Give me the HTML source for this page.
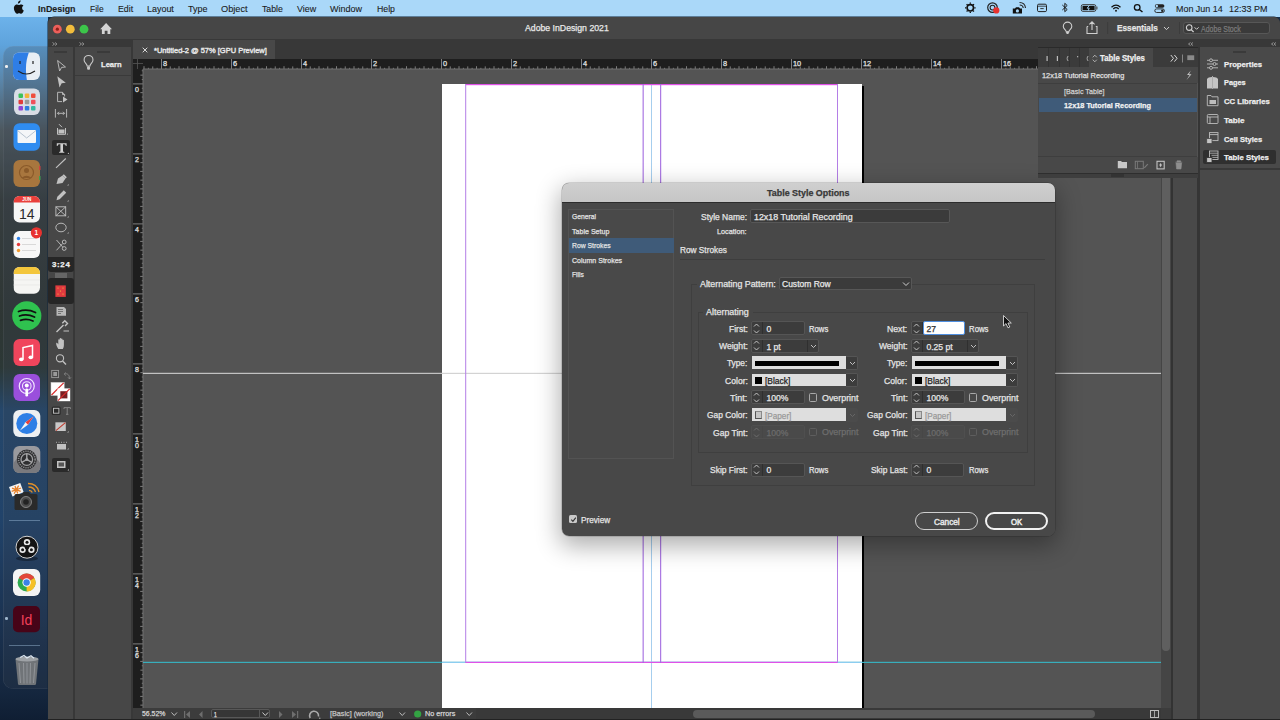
<!DOCTYPE html>
<html><head><meta charset="utf-8"><title>InDesign</title>
<style>*{margin:0;padding:0;box-sizing:border-box}html,body{width:1280px;height:720px;overflow:hidden;position:relative;background:#17324f;font-family:"Liberation Sans",sans-serif}svg{position:absolute;overflow:visible}</style>
</head><body>
<div style='position:absolute;left:0px;top:17px;width:48px;height:703px;background:linear-gradient(180deg,#6cb2ea 0px,#5ea3dc 28px,#5a86aa 63px,#4d585f 113px,#363d3f 183px,#2e3634 300px,#2c3836 350px,#25476b 393px,#21436a 503px,#1b3352 600px,#15273f 673px,#0f1e33 703px);'></div>
<div style='position:absolute;left:3px;top:45.5px;width:60px;height:643px;background:rgba(60,70,80,0.22);border-radius:10px;box-shadow:inset 0 0 0 0.6px rgba(255,255,255,0.10)'></div>
<svg style='left:0;top:52px' width='48' height='29'><defs><clipPath id='fc'><rect x='13' y='0.5' width='27' height='27.5' rx='6'/></clipPath></defs><g clip-path='url(#fc)'><rect x='13' y='0' width='27' height='29' fill='#e8eef4'/><path d='M13,0 H29 C26,8 25,16 27,29 H13Z' fill='#2f7ee6'/></g><path d='M20,9 V12 M33,9 V12' stroke='#222' stroke-width='1.2'/><path d='M18,19 Q26.5,25 35,19' fill='none' stroke='#222' stroke-width='1.1'/></svg>
<div style='position:absolute;left:5px;top:65px;width:2.5px;height:2.5px;border-radius:50%;background:#f0f0f0'></div>
<div style='position:absolute;left:5px;top:617px;width:2.5px;height:2.5px;border-radius:50%;background:#9fb6cc'></div>
<svg style='left:0;top:88px' width='48' height='28'><rect x='14' y='0.5' width='26' height='26.5' rx='6' fill='#d9dde6'/><rect x='18.5' y='5.5' width='4.5' height='4.5' rx='1' fill='#3cc15a'/><rect x='24.8' y='5.5' width='4.5' height='4.5' rx='1' fill='#f2b33a'/><rect x='31' y='5.5' width='4.5' height='4.5' rx='1' fill='#ef4c3c'/><rect x='18.5' y='11.8' width='4.5' height='4.5' rx='1' fill='#e13a3a'/><rect x='24.8' y='11.8' width='4.5' height='4.5' rx='1' fill='#9a9a9a'/><rect x='31' y='11.8' width='4.5' height='4.5' rx='1' fill='#f0505a'/><rect x='18.5' y='18' width='4.5' height='4.5' rx='1' fill='#8e44d6'/><rect x='24.8' y='18' width='4.5' height='4.5' rx='1' fill='#2e7de0'/><rect x='31' y='18' width='4.5' height='4.5' rx='1' fill='#36b8a0'/></svg>
<svg style='left:0;top:123px' width='48' height='29'><rect x='13.5' y='0.3' width='26.5' height='27.5' rx='6' fill='#2f8cf0'/><rect x='17.5' y='7' width='18.5' height='13' rx='1' fill='#f4f6f8'/><path d='M17.5,7.5 L26.7,15 L36,7.5' fill='none' stroke='#b8c4d0' stroke-width='1'/></svg>
<svg style='left:0;top:160px' width='48' height='28'><rect x='13.5' y='0' width='26.5' height='27' rx='6' fill='#a8763e'/><circle cx='26.5' cy='12.5' r='7' fill='none' stroke='#8a5a2a' stroke-width='1.2'/><circle cx='26.5' cy='10.5' r='2.5' fill='#8a5a2a'/><path d='M21.5,18 Q26.5,13.5 31.5,18' fill='#8a5a2a'/><rect x='39' y='6' width='1.5' height='4' fill='#d04040'/><rect x='39' y='16' width='1.5' height='4' fill='#40a050'/></svg>
<svg style='left:0;top:195.8px' width='48' height='27'><defs><clipPath id='cc'><rect x='13.5' y='0' width='26.5' height='26.5' rx='6'/></clipPath></defs><g clip-path='url(#cc)'><rect x='13.5' y='0' width='26.5' height='27' fill='#f6f6f6'/><rect x='13.5' y='0' width='26.5' height='6.5' fill='#e9403c'/></g><text x='26.75' y='5.3' font-family='Liberation Sans' font-size='4.6' font-weight='bold' fill='#fff' text-anchor='middle'>JUN</text><text x='26.75' y='22.5' font-family='Liberation Sans' font-size='14' fill='#2a2a2a' text-anchor='middle'>14</text></svg>
<svg style='left:0;top:226px' width='48' height='33'><rect x='13.5' y='5' width='26.5' height='27' rx='6' fill='#f7f7f7'/><circle cx='18.5' cy='12.5' r='1.7' fill='#2c7fe6'/><circle cx='18.5' cy='18.5' r='1.7' fill='#e23a3a'/><circle cx='18.5' cy='24.5' r='1.7' fill='#f29a2e'/><path d='M22,12.5 H36 M22,18.5 H36 M22,24.5 H36' stroke='#d0d0d0' stroke-width='0.8'/><circle cx='36.4' cy='6.8' r='5.6' fill='#e8322f'/><text x='36.4' y='9.3' font-family='Liberation Sans' font-size='6.5' font-weight='bold' fill='#fff' text-anchor='middle'>1</text></svg>
<svg style='left:0;top:267.2px' width='48' height='27'><defs><clipPath id='nc'><rect x='13.5' y='0' width='26.5' height='26.8' rx='6'/></clipPath></defs><g clip-path='url(#nc)'><rect x='13.5' y='0' width='26.5' height='27' fill='#f5f5f3'/><rect x='13.5' y='0' width='26.5' height='7' fill='#f3c63c'/></g><path d='M13.5,13 H40 M13.5,18 H40' stroke='#e2e2e2' stroke-width='0.6'/></svg>
<svg style='left:0;top:301px' width='48' height='30'><circle cx='26.8' cy='14.75' r='14.6' fill='#2fc24f'/><path d='M18.5,10.5 Q27,7.5 35.5,11.5 M19.5,15 Q27,12.5 34.5,16 M20.5,19.3 Q27,17.3 33,20' fill='none' stroke='#111' stroke-width='1.8' stroke-linecap='round'/></svg>
<svg style='left:0;top:338.6px' width='48' height='28'><rect x='13.5' y='0' width='26.5' height='27' rx='6' fill='#f0455c'/><path d='M23,20 V8.5 L32.5,6.5 V18' fill='none' stroke='#fff' stroke-width='1.5'/><ellipse cx='21.3' cy='20.3' rx='2.3' ry='1.9' fill='#fff'/><ellipse cx='30.8' cy='18.3' rx='2.3' ry='1.9' fill='#fff'/></svg>
<svg style='left:0;top:374px' width='48' height='28'><rect x='13.5' y='0' width='26.5' height='27' rx='6' fill='#9a4fdc'/><circle cx='26.75' cy='12' r='7.5' fill='none' stroke='#f2e6ff' stroke-width='1.2'/><circle cx='26.75' cy='12' r='4.3' fill='none' stroke='#f2e6ff' stroke-width='1.1'/><circle cx='26.75' cy='11.5' r='2' fill='#fff'/><rect x='25.4' y='14.5' width='2.7' height='8' rx='1.3' fill='#fff'/></svg>
<svg style='left:0;top:409.7px' width='48' height='28'><rect x='13.3' y='0' width='27' height='27' rx='6' fill='#eef0f2'/><circle cx='26.8' cy='13.5' r='10.5' fill='#2d7fe6'/><path d='M20,20.5 L25.5,12.2 L33.5,6.5 L28,14.8Z' fill='#f4f4f4'/><path d='M25.5,12.2 L33.5,6.5 L28,14.8Z' fill='#e8403a'/></svg>
<svg style='left:0;top:445.8px' width='48' height='28'><rect x='13.3' y='0' width='27' height='27' rx='6' fill='#9a9a9e'/><rect x='13.3' y='13' width='27' height='14' rx='6' fill='#7a7a7e'/><circle cx='26.8' cy='13.5' r='10' fill='#2e2e30'/><circle cx='26.8' cy='13.5' r='8.3' fill='none' stroke='#8a8a8c' stroke-width='1.6' stroke-dasharray='1.2 1'/><circle cx='26.8' cy='13.5' r='5.8' fill='none' stroke='#a0a0a2' stroke-width='1.3'/><path d='M26.8,13.5 L26.8,7.7 M26.8,13.5 L21.8,16.4 M26.8,13.5 L31.8,16.4' stroke='#a8a8aa' stroke-width='1.4'/><circle cx='26.8' cy='13.5' r='1.5' fill='#a8a8aa'/></svg>
<svg style='left:0;top:479.7px' width='48' height='31'><g transform='rotate(-20 17 10)'><rect x='10.5' y='4.5' width='12' height='10' fill='#f4f4f4'/><path d='M13,6.5 L20,12.5 M20,6.5 L13,12.5 M16.5,5.5 V13.5 M11.5,9.5 H21.5' stroke='#e8822a' stroke-width='1.3'/></g><path d='M28,3.5 Q37,3.5 39,12 M28.5,7 Q34,7 35.5,12 M29,10.3 Q31.5,10.3 32.3,12.5' fill='none' stroke='#e0902a' stroke-width='1.3'/><path d='M16,14 H22 L23.5,12 H29 L30.5,14 H36 Q37.5,14 37.5,15.5 V28.5 Q37.5,30 36,30 H16 Q14.5,30 14.5,28.5 V15.5 Q14.5,14 16,14Z' fill='#2a2a2a'/><circle cx='26' cy='22' r='5.5' fill='#4a4a4a' stroke='#8a8a8a' stroke-width='0.9'/><circle cx='26' cy='22' r='2.8' fill='#222'/></svg>
<div style='position:absolute;left:9px;top:520px;width:31px;height:0.8px;background:rgba(160,190,220,0.45);'></div>
<svg style='left:0;top:533.7px' width='48' height='28'><ellipse cx='27' cy='24.5' rx='11' ry='2.5' fill='rgba(0,0,0,0.35)'/><circle cx='27' cy='13.2' r='11' fill='#141414' stroke='#cfcfcf' stroke-width='1'/><g fill='#e8e8e8'><circle cx='27' cy='8.2' r='3.2'/><circle cx='22.6' cy='15.7' r='3.2'/><circle cx='31.4' cy='15.7' r='3.2'/></g><g fill='#141414'><circle cx='27' cy='8.2' r='1.5'/><circle cx='22.6' cy='15.7' r='1.5'/><circle cx='31.4' cy='15.7' r='1.5'/><circle cx='27' cy='13.2' r='2.2'/></g></svg>
<svg style='left:0;top:569px' width='48' height='28'><rect x='13' y='0' width='27.2' height='27' rx='6' fill='#f4f4f4'/><circle cx='26.6' cy='13.5' r='9' fill='#2da94f'/><path d='M26.6,13.5 L18.8,9 A9,9 0 0 1 34.4,9Z' fill='#e2463a'/><path d='M26.6,13.5 L34.4,9 A9,9 0 0 1 26.6,22.5Z' fill='#f6c026'/><circle cx='26.6' cy='13.5' r='4.2' fill='#fff'/><circle cx='26.6' cy='13.5' r='3.2' fill='#3b82e8'/></svg>
<svg style='left:0;top:605.6px' width='48' height='27'><rect x='13' y='0' width='27' height='26.3' rx='5' fill='#470418'/><text x='26.5' y='19' font-family='Liberation Sans' font-size='14' font-weight='normal' fill='#f0405a' text-anchor='middle'>Id</text></svg>
<div style='position:absolute;left:9px;top:644.5px;width:31px;height:0.8px;background:rgba(160,190,220,0.45);'></div>
<svg style='left:0;top:654px' width='48' height='32'><path d='M15.5,5 H38.5 L36,30 Q35.8,31 34.8,31 H19.2 Q18.2,31 18,30Z' fill='#707478'/><ellipse cx='27' cy='5' rx='11.5' ry='2.6' fill='#9ea2a6'/><path d='M20,3.5 L24,1.5 L27,4 L31,1.8 L34,4.2' fill='none' stroke='#dde6f0' stroke-width='1.2'/><path d='M19,9 L20.5,29 M23.5,9 L24,29.5 M27,9 V29.5 M30.5,9 L30,29.5 M35,9 L33.5,29' stroke='#a6aaae' stroke-width='0.6'/></svg>
<div style='position:absolute;left:0px;top:0px;width:1280px;height:17px;background:#aad8f9;'></div>
<div style='position:absolute;left:38.3px;top:5.37px;white-space:nowrap;line-height:1;font-family:"Liberation Sans",sans-serif;font-size:8.9px;font-weight:bold;color:#1c1c1c;transform:scaleX(1.0004);transform-origin:0 0;-webkit-text-stroke:0.25px currentColor;-webkit-text-stroke:0.1px #1c1c1c'>InDesign</div>
<div style='position:absolute;left:89.8px;top:5.37px;white-space:nowrap;line-height:1;font-family:"Liberation Sans",sans-serif;font-size:8.9px;font-weight:normal;color:#1c1c1c;transform:scaleX(0.9502);transform-origin:0 0;-webkit-text-stroke:0.25px currentColor;-webkit-text-stroke:0.1px #1c1c1c'>File</div>
<div style='position:absolute;left:117.7px;top:5.37px;white-space:nowrap;line-height:1;font-family:"Liberation Sans",sans-serif;font-size:8.9px;font-weight:normal;color:#1c1c1c;transform:scaleX(0.9871);transform-origin:0 0;-webkit-text-stroke:0.25px currentColor;-webkit-text-stroke:0.1px #1c1c1c'>Edit</div>
<div style='position:absolute;left:146.9px;top:5.37px;white-space:nowrap;line-height:1;font-family:"Liberation Sans",sans-serif;font-size:8.9px;font-weight:normal;color:#1c1c1c;transform:scaleX(1.0073);transform-origin:0 0;-webkit-text-stroke:0.25px currentColor;-webkit-text-stroke:0.1px #1c1c1c'>Layout</div>
<div style='position:absolute;left:187.7px;top:5.37px;white-space:nowrap;line-height:1;font-family:"Liberation Sans",sans-serif;font-size:8.9px;font-weight:normal;color:#1c1c1c;transform:scaleX(1.0130);transform-origin:0 0;-webkit-text-stroke:0.25px currentColor;-webkit-text-stroke:0.1px #1c1c1c'>Type</div>
<div style='position:absolute;left:221.3px;top:5.37px;white-space:nowrap;line-height:1;font-family:"Liberation Sans",sans-serif;font-size:8.9px;font-weight:normal;color:#1c1c1c;transform:scaleX(1.0368);transform-origin:0 0;-webkit-text-stroke:0.25px currentColor;-webkit-text-stroke:0.1px #1c1c1c'>Object</div>
<div style='position:absolute;left:262.2px;top:5.37px;white-space:nowrap;line-height:1;font-family:"Liberation Sans",sans-serif;font-size:8.9px;font-weight:normal;color:#1c1c1c;transform:scaleX(0.9850);transform-origin:0 0;-webkit-text-stroke:0.25px currentColor;-webkit-text-stroke:0.1px #1c1c1c'>Table</div>
<div style='position:absolute;left:296.9px;top:5.37px;white-space:nowrap;line-height:1;font-family:"Liberation Sans",sans-serif;font-size:8.9px;font-weight:normal;color:#1c1c1c;transform:scaleX(1.0064);transform-origin:0 0;-webkit-text-stroke:0.25px currentColor;-webkit-text-stroke:0.1px #1c1c1c'>View</div>
<div style='position:absolute;left:330.4px;top:5.37px;white-space:nowrap;line-height:1;font-family:"Liberation Sans",sans-serif;font-size:8.9px;font-weight:normal;color:#1c1c1c;transform:scaleX(1.0165);transform-origin:0 0;-webkit-text-stroke:0.25px currentColor;-webkit-text-stroke:0.1px #1c1c1c'>Window</div>
<div style='position:absolute;left:376.5px;top:5.37px;white-space:nowrap;line-height:1;font-family:"Liberation Sans",sans-serif;font-size:8.9px;font-weight:normal;color:#1c1c1c;transform:scaleX(0.9855);transform-origin:0 0;-webkit-text-stroke:0.25px currentColor;-webkit-text-stroke:0.1px #1c1c1c'>Help</div>
<div style='position:absolute;left:1175.9px;top:4.52px;white-space:nowrap;line-height:1;font-family:"Liberation Sans",sans-serif;font-size:8.6px;font-weight:normal;color:#1c1c1c;transform:scaleX(1.0396);transform-origin:0 0;-webkit-text-stroke:0.25px currentColor;-webkit-text-stroke:0.1px #1c1c1c'>Mon Jun 14</div>
<div style='position:absolute;left:1228.7px;top:4.52px;white-space:nowrap;line-height:1;font-family:"Liberation Sans",sans-serif;font-size:8.6px;font-weight:normal;color:#1c1c1c;transform:scaleX(1.0436);transform-origin:0 0;-webkit-text-stroke:0.25px currentColor;-webkit-text-stroke:0.1px #1c1c1c'>12:33 PM</div>
<svg style='left:0;top:0' width='1280' height='17'><path d='M19.6,4.2 C20.2,3.4 20.5,2.6 20.4,1.8 C19.6,1.9 18.8,2.4 18.3,3 C17.9,3.6 17.6,4.3 17.7,5 C18.5,5.1 19.1,4.8 19.6,4.2Z M21.9,9.5 C21.9,8 23.1,7.3 23.2,7.2 C22.5,6.2 21.4,6.1 21,6.1 C20.1,6 19.2,6.6 18.7,6.6 C18.2,6.6 17.5,6.1 16.7,6.1 C15.7,6.1 14.7,6.7 14.2,7.6 C13.1,9.5 13.9,12.3 15,13.8 C15.5,14.5 16.1,15.4 16.9,15.3 C17.7,15.3 18,14.8 18.9,14.8 C19.9,14.8 20.1,15.3 21,15.3 C21.8,15.3 22.3,14.5 22.8,13.8 C23.4,13 23.6,12.2 23.7,12.1 C23.6,12.1 21.9,11.4 21.9,9.5Z' fill='#111' transform='translate(0.2,-1.5) scale(1)'/><g transform='translate(970.3,7.8)'><circle r='3.2' fill='none' stroke='#111' stroke-width='1.6'/><g stroke='#111' stroke-width='1.3'><path d='M0,-5.3V-4M0,5.3V4M-5.3,0H-4M5.3,0H4M-3.7,-3.7L-2.8,-2.8M3.7,3.7L2.8,2.8M-3.7,3.7L-2.8,2.8M3.7,-3.7L2.8,-2.8'/></g></g><circle cx='992.5' cy='7.6' r='4.8' fill='none' stroke='#222' stroke-width='1.2'/><circle cx='992.5' cy='7.6' r='2.4' fill='none' stroke='#222' stroke-width='1.1'/><circle cx='996.3' cy='10.4' r='3.1' fill='#e8322f'/><path d='M1012.8,8.5 H1015 L1016,7.3 H1019 L1020,8.5 H1022 V13.5 H1012.8Z' fill='#111'/><circle cx='1017.4' cy='10.9' r='1.6' fill='#aad8f9'/><path d='M1019.5,2.5 Q1025,2.5 1025.5,8 M1019.7,5 Q1023,5 1023.2,8' fill='none' stroke='#222' stroke-width='1.1'/><rect x='1037.5' y='4.2' width='9' height='7.4' rx='1.3' fill='none' stroke='#222' stroke-width='1'/><path d='M1037.5,6.2 H1046.5' stroke='#222' stroke-width='0.8'/><path d='M1040.3,8.6 H1043.7' stroke='#222' stroke-width='0.9'/><path d='M1062.3,5 L1067.2,9.5 L1064.8,11.7 V3.3 L1067.2,5.5 L1062.3,10' fill='none' stroke='#111' stroke-width='0.9'/><rect x='1081.3' y='4.6' width='14.5' height='6.8' rx='1.6' fill='none' stroke='#333' stroke-width='0.9'/><rect x='1082.5' y='5.8' width='12.1' height='4.4' fill='#111'/><path d='M1089.5,5.2 L1087.2,8.2 H1089.2 L1088,11' fill='none' stroke='#aad8f9' stroke-width='0.9'/><rect x='1096.3' y='6.6' width='1.2' height='2.8' fill='#555'/><path d='M1111.5,7.2 Q1116,3 1120.5,7.2' fill='none' stroke='#111' stroke-width='1.3'/><path d='M1113.3,8.9 Q1116,6.4 1118.7,8.9' fill='none' stroke='#111' stroke-width='1.3'/><circle cx='1116' cy='10.7' r='0.95' fill='#111'/><circle cx='1137.2' cy='7.4' r='2.8' fill='none' stroke='#111' stroke-width='1.3'/><path d='M1139.3,9.5 L1142.5,12' stroke='#111' stroke-width='1.5'/><rect x='1154.8' y='4.2' width='9.6' height='3.6' rx='1.8' fill='#222'/><circle cx='1156.8' cy='6' r='1.2' fill='#aad8f9'/><rect x='1154.8' y='8.9' width='9.6' height='3.6' rx='1.8' fill='none' stroke='#222' stroke-width='0.9'/><circle cx='1162.3' cy='10.7' r='1.2' fill='#222'/></svg>
<div style='position:absolute;left:48px;top:16.5px;width:1232px;height:703.5px;background:#383838;border-top-left-radius:6px;border-top-right-radius:6px;box-shadow:0 0 0 0.5px #10243a'></div>
<div style='position:absolute;left:48px;top:17px;width:1232px;height:22px;background:#464646;border-top-left-radius:6px;border-top-right-radius:6px'></div>
<div style='position:absolute;left:48px;top:47px;width:25px;height:673px;background:#474747;'></div>
<div style='position:absolute;left:75px;top:47px;width:56px;height:673px;background:#474747;'></div>
<div style='position:absolute;left:75px;top:75px;width:56px;height:1px;background:#3d3d3d;'></div>
<div style='position:absolute;left:133px;top:40px;width:142px;height:19px;background:#484848;'></div>
<div style='position:absolute;left:133px;top:59px;width:1028px;height:10px;background:#1e1e1e;'></div>
<div style='position:absolute;left:133px;top:69px;width:10px;height:639px;background:#1e1e1e;'></div>
<div style='position:absolute;left:143px;top:69px;width:1018px;height:639px;background:#545454;'></div>
<div style='position:absolute;left:1161px;top:59px;width:10px;height:649px;background:#454545;'></div>
<div style='position:absolute;left:1162px;top:69px;width:8px;height:582px;background:#5f5f5f;border-radius:4px'></div>
<div style='position:absolute;left:1171px;top:47px;width:2px;height:673px;background:#333333;'></div>
<div style='position:absolute;left:1173px;top:47px;width:24px;height:673px;background:#494949;'></div>
<div style='position:absolute;left:1197px;top:47px;width:3px;height:673px;background:#353535;'></div>
<div style='position:absolute;left:1200px;top:47px;width:80px;height:673px;background:#494949;'></div>
<div style='position:absolute;left:133px;top:708px;width:1038px;height:12px;background:#3c3c3c;'></div>
<div style='position:absolute;left:48px;top:719px;width:1232px;height:1px;background:#222;'></div>
<div style='position:absolute;left:442px;top:84px;width:420px;height:624px;background:#ffffff;'></div>
<div style='position:absolute;left:862px;top:86px;width:2px;height:622px;background:#000;'></div>
<svg style='left:0;top:0' width='1280' height='720'><path d='M144.00,66.2V69 M148.38,67.8V69 M152.75,66.4V69 M157.12,67.8V69 M161.50,59V69 M165.88,67.8V69 M170.25,66.4V69 M174.62,67.8V69 M179.00,66.2V69 M183.38,67.8V69 M187.75,66.4V69 M192.12,67.8V69 M196.50,66.2V69 M200.88,67.8V69 M205.25,66.4V69 M209.62,67.8V69 M214.00,66.2V69 M218.38,67.8V69 M222.75,66.4V69 M227.12,67.8V69 M231.50,59V69 M235.88,67.8V69 M240.25,66.4V69 M244.62,67.8V69 M249.00,66.2V69 M253.38,67.8V69 M257.75,66.4V69 M262.12,67.8V69 M266.50,66.2V69 M270.88,67.8V69 M275.25,66.4V69 M279.62,67.8V69 M284.00,66.2V69 M288.38,67.8V69 M292.75,66.4V69 M297.12,67.8V69 M301.50,59V69 M305.88,67.8V69 M310.25,66.4V69 M314.62,67.8V69 M319.00,66.2V69 M323.38,67.8V69 M327.75,66.4V69 M332.12,67.8V69 M336.50,66.2V69 M340.88,67.8V69 M345.25,66.4V69 M349.62,67.8V69 M354.00,66.2V69 M358.38,67.8V69 M362.75,66.4V69 M367.12,67.8V69 M371.50,59V69 M375.88,67.8V69 M380.25,66.4V69 M384.62,67.8V69 M389.00,66.2V69 M393.38,67.8V69 M397.75,66.4V69 M402.12,67.8V69 M406.50,66.2V69 M410.88,67.8V69 M415.25,66.4V69 M419.62,67.8V69 M424.00,66.2V69 M428.38,67.8V69 M432.75,66.4V69 M437.12,67.8V69 M441.50,59V69 M445.88,67.8V69 M450.25,66.4V69 M454.62,67.8V69 M459.00,66.2V69 M463.38,67.8V69 M467.75,66.4V69 M472.12,67.8V69 M476.50,66.2V69 M480.88,67.8V69 M485.25,66.4V69 M489.62,67.8V69 M494.00,66.2V69 M498.38,67.8V69 M502.75,66.4V69 M507.12,67.8V69 M511.50,59V69 M515.88,67.8V69 M520.25,66.4V69 M524.62,67.8V69 M529.00,66.2V69 M533.38,67.8V69 M537.75,66.4V69 M542.12,67.8V69 M546.50,66.2V69 M550.88,67.8V69 M555.25,66.4V69 M559.62,67.8V69 M564.00,66.2V69 M568.38,67.8V69 M572.75,66.4V69 M577.12,67.8V69 M581.50,59V69 M585.88,67.8V69 M590.25,66.4V69 M594.62,67.8V69 M599.00,66.2V69 M603.38,67.8V69 M607.75,66.4V69 M612.12,67.8V69 M616.50,66.2V69 M620.88,67.8V69 M625.25,66.4V69 M629.62,67.8V69 M634.00,66.2V69 M638.38,67.8V69 M642.75,66.4V69 M647.12,67.8V69 M651.50,59V69 M655.88,67.8V69 M660.25,66.4V69 M664.62,67.8V69 M669.00,66.2V69 M673.38,67.8V69 M677.75,66.4V69 M682.12,67.8V69 M686.50,66.2V69 M690.88,67.8V69 M695.25,66.4V69 M699.62,67.8V69 M704.00,66.2V69 M708.38,67.8V69 M712.75,66.4V69 M717.12,67.8V69 M721.50,59V69 M725.88,67.8V69 M730.25,66.4V69 M734.62,67.8V69 M739.00,66.2V69 M743.38,67.8V69 M747.75,66.4V69 M752.12,67.8V69 M756.50,66.2V69 M760.88,67.8V69 M765.25,66.4V69 M769.62,67.8V69 M774.00,66.2V69 M778.38,67.8V69 M782.75,66.4V69 M787.12,67.8V69 M791.50,59V69 M795.88,67.8V69 M800.25,66.4V69 M804.62,67.8V69 M809.00,66.2V69 M813.38,67.8V69 M817.75,66.4V69 M822.12,67.8V69 M826.50,66.2V69 M830.88,67.8V69 M835.25,66.4V69 M839.62,67.8V69 M844.00,66.2V69 M848.38,67.8V69 M852.75,66.4V69 M857.12,67.8V69 M861.50,59V69 M865.88,67.8V69 M870.25,66.4V69 M874.62,67.8V69 M879.00,66.2V69 M883.38,67.8V69 M887.75,66.4V69 M892.12,67.8V69 M896.50,66.2V69 M900.88,67.8V69 M905.25,66.4V69 M909.62,67.8V69 M914.00,66.2V69 M918.38,67.8V69 M922.75,66.4V69 M927.12,67.8V69 M931.50,59V69 M935.88,67.8V69 M940.25,66.4V69 M944.62,67.8V69 M949.00,66.2V69 M953.38,67.8V69 M957.75,66.4V69 M962.12,67.8V69 M966.50,66.2V69 M970.88,67.8V69 M975.25,66.4V69 M979.62,67.8V69 M984.00,66.2V69 M988.38,67.8V69 M992.75,66.4V69 M997.12,67.8V69 M1001.50,59V69 M1005.88,67.8V69 M1010.25,66.4V69 M1014.62,67.8V69 M1019.00,66.2V69 M1023.38,67.8V69 M1027.75,66.4V69 M1032.12,67.8V69 M1036.50,66.2V69 M1040.88,67.8V69 M1045.25,66.4V69 M1049.62,67.8V69 M1054.00,66.2V69 M1058.38,67.8V69 M1062.75,66.4V69 M1067.12,67.8V69 M1071.50,59V69 M1075.88,67.8V69 M1080.25,66.4V69 M1084.62,67.8V69 M1089.00,66.2V69 M1093.38,67.8V69 M1097.75,66.4V69 M1102.12,67.8V69 M1106.50,66.2V69 M1110.88,67.8V69 M1115.25,66.4V69 M1119.62,67.8V69 M1124.00,66.2V69 M1128.38,67.8V69 M1132.75,66.4V69 M1137.12,67.8V69 M1141.50,59V69 M1145.88,67.8V69 M1150.25,66.4V69 M1154.62,67.8V69 M1159.00,66.2V69' stroke='#8a8a8a' stroke-width='0.9' fill='none'/><rect x='143' y='68.5' width='1018' height='1' fill='#707070'/></svg>
<svg style='left:0;top:0' width='1280' height='720'><path d='M141.8,70.78H143 M140.4,75.15H143 M141.8,79.53H143 M133,83.90H143 M141.8,88.28H143 M140.4,92.65H143 M141.8,97.03H143 M140.2,101.40H143 M141.8,105.78H143 M140.4,110.15H143 M141.8,114.53H143 M140.2,118.90H143 M141.8,123.28H143 M140.4,127.65H143 M141.8,132.03H143 M140.2,136.40H143 M141.8,140.78H143 M140.4,145.15H143 M141.8,149.53H143 M133,153.90H143 M141.8,158.28H143 M140.4,162.65H143 M141.8,167.03H143 M140.2,171.40H143 M141.8,175.78H143 M140.4,180.15H143 M141.8,184.53H143 M140.2,188.90H143 M141.8,193.28H143 M140.4,197.65H143 M141.8,202.03H143 M140.2,206.40H143 M141.8,210.78H143 M140.4,215.15H143 M141.8,219.53H143 M133,223.90H143 M141.8,228.28H143 M140.4,232.65H143 M141.8,237.03H143 M140.2,241.40H143 M141.8,245.78H143 M140.4,250.15H143 M141.8,254.53H143 M140.2,258.90H143 M141.8,263.27H143 M140.4,267.65H143 M141.8,272.02H143 M140.2,276.40H143 M141.8,280.77H143 M140.4,285.15H143 M141.8,289.52H143 M133,293.90H143 M141.8,298.27H143 M140.4,302.65H143 M141.8,307.02H143 M140.2,311.40H143 M141.8,315.77H143 M140.4,320.15H143 M141.8,324.52H143 M140.2,328.90H143 M141.8,333.27H143 M140.4,337.65H143 M141.8,342.02H143 M140.2,346.40H143 M141.8,350.77H143 M140.4,355.15H143 M141.8,359.52H143 M133,363.90H143 M141.8,368.27H143 M140.4,372.65H143 M141.8,377.02H143 M140.2,381.40H143 M141.8,385.77H143 M140.4,390.15H143 M141.8,394.52H143 M140.2,398.90H143 M141.8,403.27H143 M140.4,407.65H143 M141.8,412.02H143 M140.2,416.40H143 M141.8,420.77H143 M140.4,425.15H143 M141.8,429.52H143 M133,433.90H143 M141.8,438.27H143 M140.4,442.65H143 M141.8,447.02H143 M140.2,451.40H143 M141.8,455.77H143 M140.4,460.15H143 M141.8,464.52H143 M140.2,468.90H143 M141.8,473.27H143 M140.4,477.65H143 M141.8,482.02H143 M140.2,486.40H143 M141.8,490.77H143 M140.4,495.15H143 M141.8,499.52H143 M133,503.90H143 M141.8,508.27H143 M140.4,512.65H143 M141.8,517.02H143 M140.2,521.40H143 M141.8,525.77H143 M140.4,530.15H143 M141.8,534.52H143 M140.2,538.90H143 M141.8,543.27H143 M140.4,547.65H143 M141.8,552.02H143 M140.2,556.40H143 M141.8,560.77H143 M140.4,565.15H143 M141.8,569.52H143 M133,573.90H143 M141.8,578.27H143 M140.4,582.65H143 M141.8,587.02H143 M140.2,591.40H143 M141.8,595.77H143 M140.4,600.15H143 M141.8,604.52H143 M140.2,608.90H143 M141.8,613.27H143 M140.4,617.65H143 M141.8,622.02H143 M140.2,626.40H143 M141.8,630.77H143 M140.4,635.15H143 M141.8,639.52H143 M133,643.90H143 M141.8,648.27H143 M140.4,652.65H143 M141.8,657.02H143 M140.2,661.40H143 M141.8,665.77H143 M140.4,670.15H143 M141.8,674.52H143 M140.2,678.90H143 M141.8,683.27H143 M140.4,687.65H143 M141.8,692.02H143 M140.2,696.40H143 M141.8,700.77H143 M140.4,705.15H143' stroke='#8a8a8a' stroke-width='0.9' fill='none'/><rect x='142.5' y='69' width='1' height='639' fill='#707070'/></svg>
<div style='position:absolute;left:163.1px;top:61.46px;white-space:nowrap;line-height:1;font-family:"Liberation Sans",sans-serif;font-size:6.9px;font-weight:normal;color:#e2e2e2;transform:scaleX(1.0667);transform-origin:0 0;-webkit-text-stroke:0.25px currentColor;'>8</div>
<div style='position:absolute;left:233.1px;top:61.46px;white-space:nowrap;line-height:1;font-family:"Liberation Sans",sans-serif;font-size:6.9px;font-weight:normal;color:#e2e2e2;transform:scaleX(1.0667);transform-origin:0 0;-webkit-text-stroke:0.25px currentColor;'>6</div>
<div style='position:absolute;left:303.1px;top:61.46px;white-space:nowrap;line-height:1;font-family:"Liberation Sans",sans-serif;font-size:6.9px;font-weight:normal;color:#e2e2e2;transform:scaleX(1.0667);transform-origin:0 0;-webkit-text-stroke:0.25px currentColor;'>4</div>
<div style='position:absolute;left:373.1px;top:61.46px;white-space:nowrap;line-height:1;font-family:"Liberation Sans",sans-serif;font-size:6.9px;font-weight:normal;color:#e2e2e2;transform:scaleX(1.0667);transform-origin:0 0;-webkit-text-stroke:0.25px currentColor;'>2</div>
<div style='position:absolute;left:443.1px;top:61.46px;white-space:nowrap;line-height:1;font-family:"Liberation Sans",sans-serif;font-size:6.9px;font-weight:normal;color:#e2e2e2;transform:scaleX(1.0667);transform-origin:0 0;-webkit-text-stroke:0.25px currentColor;'>0</div>
<div style='position:absolute;left:513.1px;top:61.46px;white-space:nowrap;line-height:1;font-family:"Liberation Sans",sans-serif;font-size:6.9px;font-weight:normal;color:#e2e2e2;transform:scaleX(1.0667);transform-origin:0 0;-webkit-text-stroke:0.25px currentColor;'>2</div>
<div style='position:absolute;left:583.1px;top:61.46px;white-space:nowrap;line-height:1;font-family:"Liberation Sans",sans-serif;font-size:6.9px;font-weight:normal;color:#e2e2e2;transform:scaleX(1.0667);transform-origin:0 0;-webkit-text-stroke:0.25px currentColor;'>4</div>
<div style='position:absolute;left:653.1px;top:61.46px;white-space:nowrap;line-height:1;font-family:"Liberation Sans",sans-serif;font-size:6.9px;font-weight:normal;color:#e2e2e2;transform:scaleX(1.0667);transform-origin:0 0;-webkit-text-stroke:0.25px currentColor;'>6</div>
<div style='position:absolute;left:723.1px;top:61.46px;white-space:nowrap;line-height:1;font-family:"Liberation Sans",sans-serif;font-size:6.9px;font-weight:normal;color:#e2e2e2;transform:scaleX(1.0667);transform-origin:0 0;-webkit-text-stroke:0.25px currentColor;'>8</div>
<div style='position:absolute;left:793.1px;top:61.46px;white-space:nowrap;line-height:1;font-family:"Liberation Sans",sans-serif;font-size:6.9px;font-weight:normal;color:#e2e2e2;transform:scaleX(1.0688);transform-origin:0 0;-webkit-text-stroke:0.25px currentColor;'>10</div>
<div style='position:absolute;left:863.1px;top:61.46px;white-space:nowrap;line-height:1;font-family:"Liberation Sans",sans-serif;font-size:6.9px;font-weight:normal;color:#e2e2e2;transform:scaleX(1.0688);transform-origin:0 0;-webkit-text-stroke:0.25px currentColor;'>12</div>
<div style='position:absolute;left:933.1px;top:61.46px;white-space:nowrap;line-height:1;font-family:"Liberation Sans",sans-serif;font-size:6.9px;font-weight:normal;color:#e2e2e2;transform:scaleX(1.0688);transform-origin:0 0;-webkit-text-stroke:0.25px currentColor;'>14</div>
<div style='position:absolute;left:1003.1px;top:61.46px;white-space:nowrap;line-height:1;font-family:"Liberation Sans",sans-serif;font-size:6.9px;font-weight:normal;color:#e2e2e2;transform:scaleX(1.0688);transform-origin:0 0;-webkit-text-stroke:0.25px currentColor;'>16</div>
<div style='position:absolute;left:135.3px;top:87.21px;white-space:nowrap;line-height:1;font-family:"Liberation Sans",sans-serif;font-size:6.6px;font-weight:normal;color:#e2e2e2;transform:scaleX(1.0621);transform-origin:0 0;-webkit-text-stroke:0.25px currentColor;'>0</div>
<div style='position:absolute;left:135.3px;top:157.21px;white-space:nowrap;line-height:1;font-family:"Liberation Sans",sans-serif;font-size:6.6px;font-weight:normal;color:#e2e2e2;transform:scaleX(1.0621);transform-origin:0 0;-webkit-text-stroke:0.25px currentColor;'>2</div>
<div style='position:absolute;left:135.3px;top:227.21px;white-space:nowrap;line-height:1;font-family:"Liberation Sans",sans-serif;font-size:6.6px;font-weight:normal;color:#e2e2e2;transform:scaleX(1.0621);transform-origin:0 0;-webkit-text-stroke:0.25px currentColor;'>4</div>
<div style='position:absolute;left:135.3px;top:297.21px;white-space:nowrap;line-height:1;font-family:"Liberation Sans",sans-serif;font-size:6.6px;font-weight:normal;color:#e2e2e2;transform:scaleX(1.0621);transform-origin:0 0;-webkit-text-stroke:0.25px currentColor;'>6</div>
<div style='position:absolute;left:135.3px;top:367.21px;white-space:nowrap;line-height:1;font-family:"Liberation Sans",sans-serif;font-size:6.6px;font-weight:normal;color:#e2e2e2;transform:scaleX(1.0621);transform-origin:0 0;-webkit-text-stroke:0.25px currentColor;'>8</div>
<div style='position:absolute;left:135.3px;top:437.21px;white-space:nowrap;line-height:1;font-family:"Liberation Sans",sans-serif;font-size:6.6px;font-weight:normal;color:#e2e2e2;transform:scaleX(1.0621);transform-origin:0 0;-webkit-text-stroke:0.25px currentColor;'>1</div>
<div style='position:absolute;left:135.3px;top:442.81px;white-space:nowrap;line-height:1;font-family:"Liberation Sans",sans-serif;font-size:6.6px;font-weight:normal;color:#e2e2e2;transform:scaleX(1.0621);transform-origin:0 0;-webkit-text-stroke:0.25px currentColor;'>0</div>
<div style='position:absolute;left:135.3px;top:507.21px;white-space:nowrap;line-height:1;font-family:"Liberation Sans",sans-serif;font-size:6.6px;font-weight:normal;color:#e2e2e2;transform:scaleX(1.0621);transform-origin:0 0;-webkit-text-stroke:0.25px currentColor;'>1</div>
<div style='position:absolute;left:135.3px;top:512.81px;white-space:nowrap;line-height:1;font-family:"Liberation Sans",sans-serif;font-size:6.6px;font-weight:normal;color:#e2e2e2;transform:scaleX(1.0621);transform-origin:0 0;-webkit-text-stroke:0.25px currentColor;'>2</div>
<div style='position:absolute;left:135.3px;top:577.21px;white-space:nowrap;line-height:1;font-family:"Liberation Sans",sans-serif;font-size:6.6px;font-weight:normal;color:#e2e2e2;transform:scaleX(1.0621);transform-origin:0 0;-webkit-text-stroke:0.25px currentColor;'>1</div>
<div style='position:absolute;left:135.3px;top:582.81px;white-space:nowrap;line-height:1;font-family:"Liberation Sans",sans-serif;font-size:6.6px;font-weight:normal;color:#e2e2e2;transform:scaleX(1.0621);transform-origin:0 0;-webkit-text-stroke:0.25px currentColor;'>4</div>
<div style='position:absolute;left:135.3px;top:647.21px;white-space:nowrap;line-height:1;font-family:"Liberation Sans",sans-serif;font-size:6.6px;font-weight:normal;color:#e2e2e2;transform:scaleX(1.0621);transform-origin:0 0;-webkit-text-stroke:0.25px currentColor;'>1</div>
<div style='position:absolute;left:135.3px;top:652.81px;white-space:nowrap;line-height:1;font-family:"Liberation Sans",sans-serif;font-size:6.6px;font-weight:normal;color:#e2e2e2;transform:scaleX(1.0621);transform-origin:0 0;-webkit-text-stroke:0.25px currentColor;'>6</div>
<svg style='left:133px;top:59px' width='10' height='10'><path d='M0,4.5H10M4.5,0V10' stroke='#555' stroke-width='0.8'/></svg>
<svg style='left:0;top:0' width='1280' height='720'><rect x='143' y='372.8' width='1018' height='1.1' fill='#cfcfcf'/><rect x='143' y='661.8' width='1018' height='1.2' fill='#38aebc'/><rect x='442' y='661.8' width='420' height='1.2' fill='#8ccdf0'/><rect x='651' y='84' width='1' height='624' fill='#a6ceee'/><rect x='465.5' y='84' width='372' height='1.2' fill='#e050e8'/><rect x='465.5' y='661.8' width='372' height='1.2' fill='#e050e8'/><rect x='465.2' y='84' width='1' height='579' fill='#b47ee6'/><rect x='837' y='84' width='1' height='579' fill='#b47ee6'/><rect x='642.6' y='84' width='1.1' height='579' fill='#a36ce0'/><rect x='660.1' y='84' width='1.1' height='579' fill='#a36ce0'/></svg>
<div style='position:absolute;left:475.8px;top:708px;width:685.2px;height:11px;background:#393939;'></div>
<div style='position:absolute;left:692.9px;top:710px;width:402.4px;height:7.5px;background:#5a5a5a;border-radius:4px'></div>
<div style='position:absolute;left:142.4px;top:710.44px;white-space:nowrap;line-height:1;font-family:"Liberation Sans",sans-serif;font-size:7.4px;font-weight:normal;color:#d6d6d6;transform:scaleX(0.9331);transform-origin:0 0;-webkit-text-stroke:0.25px currentColor;'>56.52%</div>
<svg style='left:170.5px;top:712px' width='6.5' height='4'><polyline points='0.5,0.5 3.25,3.5 6.0,0.5' fill='none' stroke='#bbb' stroke-width='1'/></svg>
<svg style='left:183.8px;top:710.5px' width='7' height='7'><rect x='0' y='0' width='1.2' height='7' fill='#6e6e6e'/><path d='M6,0 L2,3.5 L6,7Z' fill='#6e6e6e'/></svg>
<svg style='left:198.6px;top:710.5px' width='4' height='7'><path d='M3.5,0 L0,3.5 L3.5,7Z' fill='#6e6e6e'/></svg>
<div style='position:absolute;left:211.1px;top:708.6px;width:59.4px;height:9.8px;background:#363636;border:1px solid #585858;border-radius:2px'></div>
<div style='position:absolute;left:258.8px;top:709.2px;width:1px;height:8.6px;background:#585858;'></div>
<div style='position:absolute;left:213.5px;top:710.64px;white-space:nowrap;line-height:1;font-family:"Liberation Sans",sans-serif;font-size:7.4px;font-weight:normal;color:#e0e0e0;transform:scaleX(0.6788);transform-origin:0 0;-webkit-text-stroke:0.25px currentColor;'>1</div>
<svg style='left:261.5px;top:712px' width='6.5' height='4'><polyline points='0.5,0.5 3.25,3.5 6.0,0.5' fill='none' stroke='#ccc' stroke-width='1'/></svg>
<svg style='left:279px;top:710.5px' width='4' height='7'><path d='M0,0 L3.5,3.5 L0,7Z' fill='#6e6e6e'/></svg>
<svg style='left:292px;top:710.5px' width='7' height='7'><path d='M0,0 L4,3.5 L0,7Z' fill='#6e6e6e'/><rect x='5' y='0' width='1.2' height='7' fill='#6e6e6e'/></svg>
<svg style='left:308.6px;top:709.5px' width='12' height='9'><path d='M1.2,8 A4.5,4.5 0 1 1 9.5,6.5' fill='none' stroke='#aaa' stroke-width='1.6'/><circle cx='10.8' cy='8.2' r='0.7' fill='#aaa'/></svg>
<div style='position:absolute;left:329.7px;top:710.44px;white-space:nowrap;line-height:1;font-family:"Liberation Sans",sans-serif;font-size:7.4px;font-weight:normal;color:#c4c4c4;transform:scaleX(0.9776);transform-origin:0 0;-webkit-text-stroke:0.25px currentColor;'>[Basic] (working)</div>
<svg style='left:398.75px;top:712px' width='6.5' height='4'><polyline points='0.5,0.5 3.25,3.5 6.0,0.5' fill='none' stroke='#bbb' stroke-width='1'/></svg>
<svg style='left:413.75px;top:710px' width='8' height='8'><circle cx='3.7' cy='4' r='3.6' fill='#33a343'/></svg>
<div style='position:absolute;left:424.7px;top:710.44px;white-space:nowrap;line-height:1;font-family:"Liberation Sans",sans-serif;font-size:7.4px;font-weight:normal;color:#d6d6d6;transform:scaleX(0.9834);transform-origin:0 0;-webkit-text-stroke:0.25px currentColor;'>No errors</div>
<svg style='left:466.4px;top:712px' width='6.5' height='4'><polyline points='0.5,0.5 3.25,3.5 6.0,0.5' fill='none' stroke='#bbb' stroke-width='1'/></svg>
<svg style='left:1150px;top:709.5px' width='9' height='8'><rect x='0.5' y='0.5' width='8' height='7' fill='none' stroke='#bbb' stroke-width='1'/><rect x='4.2' y='0.5' width='0.8' height='7' fill='#bbb'/></svg>
<div style='position:absolute;left:561.5px;top:182.5px;width:493.5px;height:353.5px;border-radius:7px;box-shadow:0 8px 24px 2px rgba(0,0,0,0.32),0 0 0 0.5px rgba(0,0,0,0.25)'></div>
<div style='position:absolute;left:561.5px;top:182.5px;width:493.5px;height:353.5px;background:#484848;border-radius:7px;overflow:hidden'></div>
<div style='position:absolute;left:561.5px;top:182.5px;width:493.5px;height:19.5px;background:linear-gradient(#cfcfcf,#c6c6c6);border-radius:7px 7px 0 0'></div>
<div style='position:absolute;left:561.5px;top:202px;width:493.5px;height:1px;background:#2c2c2c;'></div>
<div style='position:absolute;left:766.7px;top:188.82px;white-space:nowrap;line-height:1;font-family:"Liberation Sans",sans-serif;font-size:8.6px;font-weight:bold;color:#383838;transform:scaleX(1.0365);transform-origin:0 0;-webkit-text-stroke:0.25px currentColor;'>Table Style Options</div>
<div style='position:absolute;left:567.75px;top:208.5px;width:106.5px;height:250px;background:#494949;border:1px solid #535353'></div>
<div style='position:absolute;left:568.5px;top:238.1px;width:105.5px;height:15.4px;background:#3f5b79;'></div>
<div style='position:absolute;left:572px;top:213.03px;white-space:nowrap;line-height:1;font-family:"Liberation Sans",sans-serif;font-size:8px;font-weight:normal;color:#e4e4e4;transform:scaleX(0.8430);transform-origin:0 0;-webkit-text-stroke:0.25px currentColor;'>General</div>
<div style='position:absolute;left:572px;top:227.63px;white-space:nowrap;line-height:1;font-family:"Liberation Sans",sans-serif;font-size:8px;font-weight:normal;color:#e4e4e4;transform:scaleX(0.8849);transform-origin:0 0;-webkit-text-stroke:0.25px currentColor;'>Table Setup</div>
<div style='position:absolute;left:572px;top:242.13px;white-space:nowrap;line-height:1;font-family:"Liberation Sans",sans-serif;font-size:8px;font-weight:normal;color:#e4e4e4;transform:scaleX(0.8510);transform-origin:0 0;-webkit-text-stroke:0.25px currentColor;'>Row Strokes</div>
<div style='position:absolute;left:572px;top:256.73px;white-space:nowrap;line-height:1;font-family:"Liberation Sans",sans-serif;font-size:8px;font-weight:normal;color:#e4e4e4;transform:scaleX(0.8802);transform-origin:0 0;-webkit-text-stroke:0.25px currentColor;'>Column Strokes</div>
<div style='position:absolute;left:572px;top:271.13px;white-space:nowrap;line-height:1;font-family:"Liberation Sans",sans-serif;font-size:8px;font-weight:normal;color:#e4e4e4;transform:scaleX(0.8264);transform-origin:0 0;-webkit-text-stroke:0.25px currentColor;'>Fills</div>
<div style='position:absolute;left:700.6px;top:213.86px;white-space:nowrap;line-height:1;font-family:"Liberation Sans",sans-serif;font-size:8.2px;font-weight:normal;color:#e4e4e4;transform:scaleX(1.0315);transform-origin:0 0;-webkit-text-stroke:0.25px currentColor;'>Style Name:</div>
<div style='position:absolute;left:750.4px;top:208.6px;width:199.4px;height:14px;background:#3b3b3b;border:1px solid #575757;border-radius:2px'></div>
<div style='position:absolute;left:753.8px;top:213.86px;white-space:nowrap;line-height:1;font-family:"Liberation Sans",sans-serif;font-size:8.2px;font-weight:normal;color:#e6e6e6;transform:scaleX(1.0831);transform-origin:0 0;-webkit-text-stroke:0.25px currentColor;'>12x18 Tutorial Recording</div>
<div style='position:absolute;left:717.1px;top:228.47px;white-space:nowrap;line-height:1;font-family:"Liberation Sans",sans-serif;font-size:7.6px;font-weight:normal;color:#e4e4e4;transform:scaleX(0.9569);transform-origin:0 0;-webkit-text-stroke:0.25px currentColor;'>Location:</div>
<div style='position:absolute;left:680.2px;top:245.72px;white-space:nowrap;line-height:1;font-family:"Liberation Sans",sans-serif;font-size:8.6px;font-weight:normal;color:#e4e4e4;transform:scaleX(0.9627);transform-origin:0 0;-webkit-text-stroke:0.25px currentColor;'>Row Strokes</div>
<div style='position:absolute;left:680px;top:259px;width:365px;height:1px;background:#3d3d3d;'></div>
<div style='position:absolute;left:690.6px;top:284.4px;width:344px;height:102px;background:transparent;border:1px solid #3f3f3f;height:202px'></div>
<div style='position:absolute;left:697.8px;top:311.5px;width:330px;height:141px;background:transparent;border:1px solid #3f3f3f'></div>
<div style='position:absolute;left:697px;top:280px;width:80px;height:8px;background:#484848;'></div>
<div style='position:absolute;left:703px;top:307px;width:50px;height:8px;background:#484848;'></div>
<div style='position:absolute;left:699.5px;top:281.36px;white-space:nowrap;line-height:1;font-family:"Liberation Sans",sans-serif;font-size:8.2px;font-weight:normal;color:#e4e4e4;transform:scaleX(1.0814);transform-origin:0 0;-webkit-text-stroke:0.25px currentColor;'>Alternating Pattern:</div>
<div style='position:absolute;left:779.2px;top:277px;width:132.5px;height:13.2px;background:#3b3b3b;border:1px solid #575757;border-radius:2px'></div>
<div style='position:absolute;left:781.5px;top:281.36px;white-space:nowrap;line-height:1;font-family:"Liberation Sans",sans-serif;font-size:8.2px;font-weight:normal;color:#e6e6e6;transform:scaleX(1.0389);transform-origin:0 0;-webkit-text-stroke:0.25px currentColor;'>Custom Row</div>
<svg style='left:902px;top:281px' width='8' height='6'><polyline points='1,1.5 4,4.5 7,1.5' fill='none' stroke='#cfcfcf' stroke-width='1'/></svg>
<div style='position:absolute;left:706.25px;top:308.71px;white-space:nowrap;line-height:1;font-family:"Liberation Sans",sans-serif;font-size:8.2px;font-weight:normal;color:#e4e4e4;transform:scaleX(1.0918);transform-origin:0 0;-webkit-text-stroke:0.25px currentColor;'>Alternating</div>
<div style='position:absolute;left:728.6px;top:325.96px;white-space:nowrap;line-height:1;font-family:"Liberation Sans",sans-serif;font-size:8.2px;font-weight:normal;color:#e4e4e4;transform:scaleX(1.0383);transform-origin:0 0;-webkit-text-stroke:0.25px currentColor;'>First:</div>
<div style='position:absolute;left:718.6px;top:343.46px;white-space:nowrap;line-height:1;font-family:"Liberation Sans",sans-serif;font-size:8.2px;font-weight:normal;color:#e4e4e4;transform:scaleX(1.0467);transform-origin:0 0;-webkit-text-stroke:0.25px currentColor;'>Weight:</div>
<div style='position:absolute;left:727.2px;top:360.06px;white-space:nowrap;line-height:1;font-family:"Liberation Sans",sans-serif;font-size:8.2px;font-weight:normal;color:#e4e4e4;transform:scaleX(1.0134);transform-origin:0 0;-webkit-text-stroke:0.25px currentColor;'>Type:</div>
<div style='position:absolute;left:724.6px;top:377.96px;white-space:nowrap;line-height:1;font-family:"Liberation Sans",sans-serif;font-size:8.2px;font-weight:normal;color:#e4e4e4;transform:scaleX(1.0484);transform-origin:0 0;-webkit-text-stroke:0.25px currentColor;'>Color:</div>
<div style='position:absolute;left:730.3px;top:394.86px;white-space:nowrap;line-height:1;font-family:"Liberation Sans",sans-serif;font-size:8.2px;font-weight:normal;color:#e4e4e4;transform:scaleX(1.1008);transform-origin:0 0;-webkit-text-stroke:0.25px currentColor;'>Tint:</div>
<div style='position:absolute;left:706.9px;top:412.16px;white-space:nowrap;line-height:1;font-family:"Liberation Sans",sans-serif;font-size:8.2px;font-weight:normal;color:#e4e4e4;transform:scaleX(1.0254);transform-origin:0 0;-webkit-text-stroke:0.25px currentColor;'>Gap Color:</div>
<div style='position:absolute;left:712.6px;top:429.76px;white-space:nowrap;line-height:1;font-family:"Liberation Sans",sans-serif;font-size:8.2px;font-weight:normal;color:#e4e4e4;transform:scaleX(1.0501);transform-origin:0 0;-webkit-text-stroke:0.25px currentColor;'>Gap Tint:</div>
<div style='position:absolute;left:751.1px;top:321px;width:54.1px;height:14px;background:#3c3c3c;border:1px solid #555555;border-radius:2px'></div>
<div style='position:absolute;left:762.1px;top:322px;width:1px;height:12px;background:#2f2f2f;'></div>
<svg style='left:753.4px;top:322.6px' width='7' height='11'><polyline points='1,3.5 3.5,1 6,3.5' fill='none' stroke='#d0d0d0' stroke-width='0.9'/><polyline points='1,7.5 3.5,10 6,7.5' fill='none' stroke='#d0d0d0' stroke-width='0.9'/></svg>
<div style='position:absolute;left:766.4px;top:324.92px;white-space:nowrap;line-height:1;font-family:"Liberation Sans",sans-serif;font-size:8.6px;font-weight:normal;color:#e6e6e6;-webkit-text-stroke:0.25px currentColor;'>0</div>
<div style='position:absolute;left:808.9px;top:325.96px;white-space:nowrap;line-height:1;font-family:"Liberation Sans",sans-serif;font-size:8.2px;font-weight:normal;color:#e4e4e4;transform:scaleX(0.9422);transform-origin:0 0;-webkit-text-stroke:0.25px currentColor;'>Rows</div>
<div style='position:absolute;left:751.1px;top:338.6px;width:68px;height:14px;background:#3c3c3c;border:1px solid #555555;border-radius:2px'></div>
<div style='position:absolute;left:762.1px;top:339.6px;width:1px;height:12px;background:#2f2f2f;'></div>
<svg style='left:753.4px;top:340.20000000000005px' width='7' height='11'><polyline points='1,3.5 3.5,1 6,3.5' fill='none' stroke='#d0d0d0' stroke-width='0.9'/><polyline points='1,7.5 3.5,10 6,7.5' fill='none' stroke='#d0d0d0' stroke-width='0.9'/></svg>
<div style='position:absolute;left:807.1px;top:339.6px;width:1px;height:12px;background:#2f2f2f;'></div>
<svg style='left:810.1px;top:343.6px' width='7' height='5'><polyline points='1,1 3.5,3.5 6,1' fill='none' stroke='#cfcfcf' stroke-width='0.9'/></svg>
<div style='position:absolute;left:766.4px;top:342.52px;white-space:nowrap;line-height:1;font-family:"Liberation Sans",sans-serif;font-size:8.6px;font-weight:normal;color:#e6e6e6;-webkit-text-stroke:0.25px currentColor;'>1 pt</div>
<div style='position:absolute;left:751.8px;top:356.4px;width:94px;height:12.8px;background:#dedede;'></div>
<div style='position:absolute;left:845.8px;top:355.9px;width:12px;height:13.8px;background:#3c3c3c;border:1px solid #555;border-left:none;border-radius:0 2px 2px 0'></div>
<svg style='left:848.8px;top:360.9px' width='7' height='5'><polyline points='1,1 3.5,3.5 6,1' fill='none' stroke='#cfcfcf' stroke-width='0.9'/></svg>
<div style='position:absolute;left:754.8px;top:360.5px;width:84.7px;height:5.4px;background:#000;'></div>
<div style='position:absolute;left:751.8px;top:373.6px;width:94px;height:12.8px;background:#dedede;'></div>
<div style='position:absolute;left:845.8px;top:373.1px;width:12px;height:13.8px;background:#3c3c3c;border:1px solid #555;border-left:none;border-radius:0 2px 2px 0'></div>
<svg style='left:848.8px;top:378.1px' width='7' height='5'><polyline points='1,1 3.5,3.5 6,1' fill='none' stroke='#cfcfcf' stroke-width='0.9'/></svg>
<div style='position:absolute;left:754.8px;top:377.0px;width:7.7px;height:7.2px;background:#000;'></div>
<div style='position:absolute;left:764.8px;top:378.06px;white-space:nowrap;line-height:1;font-family:"Liberation Sans",sans-serif;font-size:8.2px;font-weight:normal;color:#222;transform:scaleX(1.0294);transform-origin:0 0;-webkit-text-stroke:0.25px currentColor;'>[Black]</div>
<div style='position:absolute;left:751.1px;top:390.3px;width:54.1px;height:14px;background:#3c3c3c;border:1px solid #555555;border-radius:2px'></div>
<div style='position:absolute;left:762.1px;top:391.3px;width:1px;height:12px;background:#2f2f2f;'></div>
<svg style='left:753.4px;top:391.90000000000003px' width='7' height='11'><polyline points='1,3.5 3.5,1 6,3.5' fill='none' stroke='#d0d0d0' stroke-width='0.9'/><polyline points='1,7.5 3.5,10 6,7.5' fill='none' stroke='#d0d0d0' stroke-width='0.9'/></svg>
<div style='position:absolute;left:766.4px;top:394.22px;white-space:nowrap;line-height:1;font-family:"Liberation Sans",sans-serif;font-size:8.6px;font-weight:normal;color:#e6e6e6;-webkit-text-stroke:0.25px currentColor;'>100%</div>
<div style='position:absolute;left:809.2px;top:393.2px;width:8.3px;height:8.4px;background:transparent;border:1px solid #a8a8a8;border-radius:1.5px'></div>
<div style='position:absolute;left:821.5px;top:394.96px;white-space:nowrap;line-height:1;font-family:"Liberation Sans",sans-serif;font-size:8.2px;font-weight:normal;color:#e4e4e4;transform:scaleX(1.0840);transform-origin:0 0;-webkit-text-stroke:0.25px currentColor;'>Overprint</div>
<div style='position:absolute;left:751.8px;top:408.4px;width:94px;height:12.8px;background:#dedede;'></div>
<div style='position:absolute;left:845.8px;top:407.9px;width:12px;height:13.8px;background:#4b4b4b;border-radius:0 2px 2px 0'></div>
<svg style='left:848.8px;top:412.9px' width='7' height='5'><polyline points='1,1 3.5,3.5 6,1' fill='none' stroke='#6a6a6a' stroke-width='0.9'/></svg>
<div style='position:absolute;left:754.8px;top:411.4px;width:7.7px;height:7.2px;background:#c6c6c6;border:1px solid #8a8a8a;border-left-color:#555;border-bottom-color:#555'></div>
<div style='position:absolute;left:765.0px;top:412.86px;white-space:nowrap;line-height:1;font-family:"Liberation Sans",sans-serif;font-size:8.2px;font-weight:normal;color:#9a9a9a;transform:scaleX(0.9998);transform-origin:0 0;-webkit-text-stroke:0.25px currentColor;'>[Paper]</div>
<div style='position:absolute;left:751.1px;top:425.2px;width:54.1px;height:14px;background:#4a4a4a;border:1px solid #4f4f4f;border-radius:2px'></div>
<div style='position:absolute;left:762.1px;top:426.2px;width:1px;height:12px;background:#474747;'></div>
<svg style='left:753.4px;top:426.8px' width='7' height='11'><polyline points='1,3.5 3.5,1 6,3.5' fill='none' stroke='#707070' stroke-width='0.9'/><polyline points='1,7.5 3.5,10 6,7.5' fill='none' stroke='#707070' stroke-width='0.9'/></svg>
<div style='position:absolute;left:766.4px;top:429.12px;white-space:nowrap;line-height:1;font-family:"Liberation Sans",sans-serif;font-size:8.6px;font-weight:normal;color:#6c6c6c;-webkit-text-stroke:0.25px currentColor;'>100%</div>
<div style='position:absolute;left:809.2px;top:427.6px;width:8.3px;height:8.4px;background:transparent;border:1px solid #5e5e5e;border-radius:1.5px'></div>
<div style='position:absolute;left:821.5px;top:429.36px;white-space:nowrap;line-height:1;font-family:"Liberation Sans",sans-serif;font-size:8.2px;font-weight:normal;color:#6e6e6e;transform:scaleX(1.0840);transform-origin:0 0;-webkit-text-stroke:0.25px currentColor;'>Overprint</div>
<div style='position:absolute;left:887.2px;top:325.96px;white-space:nowrap;line-height:1;font-family:"Liberation Sans",sans-serif;font-size:8.2px;font-weight:normal;color:#e4e4e4;transform:scaleX(1.0614);transform-origin:0 0;-webkit-text-stroke:0.25px currentColor;'>Next:</div>
<div style='position:absolute;left:878.9px;top:343.46px;white-space:nowrap;line-height:1;font-family:"Liberation Sans",sans-serif;font-size:8.2px;font-weight:normal;color:#e4e4e4;transform:scaleX(1.0359);transform-origin:0 0;-webkit-text-stroke:0.25px currentColor;'>Weight:</div>
<div style='position:absolute;left:887.2px;top:360.06px;white-space:nowrap;line-height:1;font-family:"Liberation Sans",sans-serif;font-size:8.2px;font-weight:normal;color:#e4e4e4;transform:scaleX(1.0134);transform-origin:0 0;-webkit-text-stroke:0.25px currentColor;'>Type:</div>
<div style='position:absolute;left:884.4px;top:377.96px;white-space:nowrap;line-height:1;font-family:"Liberation Sans",sans-serif;font-size:8.2px;font-weight:normal;color:#e4e4e4;transform:scaleX(1.0575);transform-origin:0 0;-webkit-text-stroke:0.25px currentColor;'>Color:</div>
<div style='position:absolute;left:890.6px;top:394.86px;white-space:nowrap;line-height:1;font-family:"Liberation Sans",sans-serif;font-size:8.2px;font-weight:normal;color:#e4e4e4;transform:scaleX(1.0816);transform-origin:0 0;-webkit-text-stroke:0.25px currentColor;'>Tint:</div>
<div style='position:absolute;left:866.9px;top:412.16px;white-space:nowrap;line-height:1;font-family:"Liberation Sans",sans-serif;font-size:8.2px;font-weight:normal;color:#e4e4e4;transform:scaleX(1.0254);transform-origin:0 0;-webkit-text-stroke:0.25px currentColor;'>Gap Color:</div>
<div style='position:absolute;left:872.5px;top:429.76px;white-space:nowrap;line-height:1;font-family:"Liberation Sans",sans-serif;font-size:8.2px;font-weight:normal;color:#e4e4e4;transform:scaleX(1.0531);transform-origin:0 0;-webkit-text-stroke:0.25px currentColor;'>Gap Tint:</div>
<div style='position:absolute;left:911.1px;top:321px;width:54.1px;height:14px;background:#3c3c3c;border:1px solid #555555;border-radius:2px'></div>
<div style='position:absolute;left:922.1px;top:322px;width:1px;height:12px;background:#2f2f2f;'></div>
<svg style='left:913.4px;top:322.6px' width='7' height='11'><polyline points='1,3.5 3.5,1 6,3.5' fill='none' stroke='#d0d0d0' stroke-width='0.9'/><polyline points='1,7.5 3.5,10 6,7.5' fill='none' stroke='#d0d0d0' stroke-width='0.9'/></svg>
<div style='position:absolute;left:923.1px;top:321.3px;width:42.1px;height:13.7px;background:#ffffff;border:1.3px solid #4f8fe0;border-radius:2px'></div>
<div style='position:absolute;left:926.4px;top:324.92px;white-space:nowrap;line-height:1;font-family:"Liberation Sans",sans-serif;font-size:8.6px;font-weight:normal;color:#333;-webkit-text-stroke:0.25px currentColor;'>27</div>
<div style='position:absolute;left:969px;top:325.96px;white-space:nowrap;line-height:1;font-family:"Liberation Sans",sans-serif;font-size:8.2px;font-weight:normal;color:#e4e4e4;transform:scaleX(0.9519);transform-origin:0 0;-webkit-text-stroke:0.25px currentColor;'>Rows</div>
<div style='position:absolute;left:911.1px;top:338.6px;width:68px;height:14px;background:#3c3c3c;border:1px solid #555555;border-radius:2px'></div>
<div style='position:absolute;left:922.1px;top:339.6px;width:1px;height:12px;background:#2f2f2f;'></div>
<svg style='left:913.4px;top:340.20000000000005px' width='7' height='11'><polyline points='1,3.5 3.5,1 6,3.5' fill='none' stroke='#d0d0d0' stroke-width='0.9'/><polyline points='1,7.5 3.5,10 6,7.5' fill='none' stroke='#d0d0d0' stroke-width='0.9'/></svg>
<div style='position:absolute;left:967.1px;top:339.6px;width:1px;height:12px;background:#2f2f2f;'></div>
<svg style='left:970.1px;top:343.6px' width='7' height='5'><polyline points='1,1 3.5,3.5 6,1' fill='none' stroke='#cfcfcf' stroke-width='0.9'/></svg>
<div style='position:absolute;left:926.4px;top:342.52px;white-space:nowrap;line-height:1;font-family:"Liberation Sans",sans-serif;font-size:8.6px;font-weight:normal;color:#e6e6e6;-webkit-text-stroke:0.25px currentColor;'>0.25 pt</div>
<div style='position:absolute;left:911.8px;top:356.4px;width:94px;height:12.8px;background:#dedede;'></div>
<div style='position:absolute;left:1005.8px;top:355.9px;width:12px;height:13.8px;background:#3c3c3c;border:1px solid #555;border-left:none;border-radius:0 2px 2px 0'></div>
<svg style='left:1008.8px;top:360.9px' width='7' height='5'><polyline points='1,1 3.5,3.5 6,1' fill='none' stroke='#cfcfcf' stroke-width='0.9'/></svg>
<div style='position:absolute;left:914.8px;top:360.5px;width:84.7px;height:5.4px;background:#000;'></div>
<div style='position:absolute;left:911.8px;top:373.6px;width:94px;height:12.8px;background:#dedede;'></div>
<div style='position:absolute;left:1005.8px;top:373.1px;width:12px;height:13.8px;background:#3c3c3c;border:1px solid #555;border-left:none;border-radius:0 2px 2px 0'></div>
<svg style='left:1008.8px;top:378.1px' width='7' height='5'><polyline points='1,1 3.5,3.5 6,1' fill='none' stroke='#cfcfcf' stroke-width='0.9'/></svg>
<div style='position:absolute;left:914.8px;top:377.0px;width:7.7px;height:7.2px;background:#000;'></div>
<div style='position:absolute;left:924.8px;top:378.06px;white-space:nowrap;line-height:1;font-family:"Liberation Sans",sans-serif;font-size:8.2px;font-weight:normal;color:#222;transform:scaleX(1.0294);transform-origin:0 0;-webkit-text-stroke:0.25px currentColor;'>[Black]</div>
<div style='position:absolute;left:911.1px;top:390.3px;width:54.1px;height:14px;background:#3c3c3c;border:1px solid #555555;border-radius:2px'></div>
<div style='position:absolute;left:922.1px;top:391.3px;width:1px;height:12px;background:#2f2f2f;'></div>
<svg style='left:913.4px;top:391.90000000000003px' width='7' height='11'><polyline points='1,3.5 3.5,1 6,3.5' fill='none' stroke='#d0d0d0' stroke-width='0.9'/><polyline points='1,7.5 3.5,10 6,7.5' fill='none' stroke='#d0d0d0' stroke-width='0.9'/></svg>
<div style='position:absolute;left:926.4px;top:394.22px;white-space:nowrap;line-height:1;font-family:"Liberation Sans",sans-serif;font-size:8.6px;font-weight:normal;color:#e6e6e6;-webkit-text-stroke:0.25px currentColor;'>100%</div>
<div style='position:absolute;left:969.2px;top:393.2px;width:8.3px;height:8.4px;background:transparent;border:1px solid #a8a8a8;border-radius:1.5px'></div>
<div style='position:absolute;left:981.5px;top:394.96px;white-space:nowrap;line-height:1;font-family:"Liberation Sans",sans-serif;font-size:8.2px;font-weight:normal;color:#e4e4e4;transform:scaleX(1.0840);transform-origin:0 0;-webkit-text-stroke:0.25px currentColor;'>Overprint</div>
<div style='position:absolute;left:911.8px;top:408.4px;width:94px;height:12.8px;background:#dedede;'></div>
<div style='position:absolute;left:1005.8px;top:407.9px;width:12px;height:13.8px;background:#4b4b4b;border-radius:0 2px 2px 0'></div>
<svg style='left:1008.8px;top:412.9px' width='7' height='5'><polyline points='1,1 3.5,3.5 6,1' fill='none' stroke='#6a6a6a' stroke-width='0.9'/></svg>
<div style='position:absolute;left:914.8px;top:411.4px;width:7.7px;height:7.2px;background:#c6c6c6;border:1px solid #8a8a8a;border-left-color:#555;border-bottom-color:#555'></div>
<div style='position:absolute;left:925.0px;top:412.86px;white-space:nowrap;line-height:1;font-family:"Liberation Sans",sans-serif;font-size:8.2px;font-weight:normal;color:#9a9a9a;transform:scaleX(0.9998);transform-origin:0 0;-webkit-text-stroke:0.25px currentColor;'>[Paper]</div>
<div style='position:absolute;left:911.1px;top:425.2px;width:54.1px;height:14px;background:#4a4a4a;border:1px solid #4f4f4f;border-radius:2px'></div>
<div style='position:absolute;left:922.1px;top:426.2px;width:1px;height:12px;background:#474747;'></div>
<svg style='left:913.4px;top:426.8px' width='7' height='11'><polyline points='1,3.5 3.5,1 6,3.5' fill='none' stroke='#707070' stroke-width='0.9'/><polyline points='1,7.5 3.5,10 6,7.5' fill='none' stroke='#707070' stroke-width='0.9'/></svg>
<div style='position:absolute;left:926.4px;top:429.12px;white-space:nowrap;line-height:1;font-family:"Liberation Sans",sans-serif;font-size:8.6px;font-weight:normal;color:#6c6c6c;-webkit-text-stroke:0.25px currentColor;'>100%</div>
<div style='position:absolute;left:969.2px;top:427.6px;width:8.3px;height:8.4px;background:transparent;border:1px solid #5e5e5e;border-radius:1.5px'></div>
<div style='position:absolute;left:981.5px;top:429.36px;white-space:nowrap;line-height:1;font-family:"Liberation Sans",sans-serif;font-size:8.2px;font-weight:normal;color:#6e6e6e;transform:scaleX(1.0840);transform-origin:0 0;-webkit-text-stroke:0.25px currentColor;'>Overprint</div>
<div style='position:absolute;left:709.8px;top:467.26px;white-space:nowrap;line-height:1;font-family:"Liberation Sans",sans-serif;font-size:8.2px;font-weight:normal;color:#e4e4e4;transform:scaleX(1.0355);transform-origin:0 0;-webkit-text-stroke:0.25px currentColor;'>Skip First:</div>
<div style='position:absolute;left:751.1px;top:462.5px;width:54.1px;height:14px;background:#3c3c3c;border:1px solid #555555;border-radius:2px'></div>
<div style='position:absolute;left:762.1px;top:463.5px;width:1px;height:12px;background:#2f2f2f;'></div>
<svg style='left:753.4px;top:464.1px' width='7' height='11'><polyline points='1,3.5 3.5,1 6,3.5' fill='none' stroke='#d0d0d0' stroke-width='0.9'/><polyline points='1,7.5 3.5,10 6,7.5' fill='none' stroke='#d0d0d0' stroke-width='0.9'/></svg>
<div style='position:absolute;left:766.4px;top:466.42px;white-space:nowrap;line-height:1;font-family:"Liberation Sans",sans-serif;font-size:8.6px;font-weight:normal;color:#e6e6e6;-webkit-text-stroke:0.25px currentColor;'>0</div>
<div style='position:absolute;left:808.9px;top:467.16px;white-space:nowrap;line-height:1;font-family:"Liberation Sans",sans-serif;font-size:8.2px;font-weight:normal;color:#e4e4e4;transform:scaleX(0.9422);transform-origin:0 0;-webkit-text-stroke:0.25px currentColor;'>Rows</div>
<div style='position:absolute;left:870.6px;top:467.26px;white-space:nowrap;line-height:1;font-family:"Liberation Sans",sans-serif;font-size:8.2px;font-weight:normal;color:#e4e4e4;transform:scaleX(1.0263);transform-origin:0 0;-webkit-text-stroke:0.25px currentColor;'>Skip Last:</div>
<div style='position:absolute;left:911.1px;top:462.5px;width:53px;height:14px;background:#3c3c3c;border:1px solid #555555;border-radius:2px'></div>
<div style='position:absolute;left:922.1px;top:463.5px;width:1px;height:12px;background:#2f2f2f;'></div>
<svg style='left:913.4px;top:464.1px' width='7' height='11'><polyline points='1,3.5 3.5,1 6,3.5' fill='none' stroke='#d0d0d0' stroke-width='0.9'/><polyline points='1,7.5 3.5,10 6,7.5' fill='none' stroke='#d0d0d0' stroke-width='0.9'/></svg>
<div style='position:absolute;left:926.4px;top:466.42px;white-space:nowrap;line-height:1;font-family:"Liberation Sans",sans-serif;font-size:8.6px;font-weight:normal;color:#e6e6e6;-webkit-text-stroke:0.25px currentColor;'>0</div>
<div style='position:absolute;left:968.7px;top:467.16px;white-space:nowrap;line-height:1;font-family:"Liberation Sans",sans-serif;font-size:8.2px;font-weight:normal;color:#e4e4e4;transform:scaleX(0.9422);transform-origin:0 0;-webkit-text-stroke:0.25px currentColor;'>Rows</div>
<div style='position:absolute;left:568.7px;top:514.8px;width:8.5px;height:8.5px;background:#c9c9c9;border-radius:1.5px'></div>
<svg style='left:569.5px;top:515.5px' width='7' height='7'><polyline points='1.3,3.6 2.9,5.3 5.8,1.6' fill='none' stroke='#333' stroke-width='1.1'/></svg>
<div style='position:absolute;left:580.9px;top:516.39px;white-space:nowrap;line-height:1;font-family:"Liberation Sans",sans-serif;font-size:8.4px;font-weight:normal;color:#e4e4e4;transform:scaleX(0.9766);transform-origin:0 0;-webkit-text-stroke:0.25px currentColor;'>Preview</div>
<div style='position:absolute;left:914.7px;top:511.9px;width:63.5px;height:18.1px;background:transparent;border:1.2px solid #cfcfcf;border-radius:9px'></div>
<div style='position:absolute;left:984.7px;top:511.9px;width:63.4px;height:18.1px;background:transparent;border:2px solid #f2f2f2;border-radius:9px'></div>
<div style='position:absolute;left:933.5px;top:518.42px;white-space:nowrap;line-height:1;font-family:"Liberation Sans",sans-serif;font-size:8.6px;font-weight:normal;color:#e6e6e6;transform:scaleX(0.9602);transform-origin:0 0;-webkit-text-stroke:0.25px currentColor;-webkit-text-stroke:0.45px #e6e6e6'>Cancel</div>
<div style='position:absolute;left:1010.6px;top:518.42px;white-space:nowrap;line-height:1;font-family:"Liberation Sans",sans-serif;font-size:8.6px;font-weight:normal;color:#f0f0f0;transform:scaleX(0.9016);transform-origin:0 0;-webkit-text-stroke:0.25px currentColor;-webkit-text-stroke:0.45px #f0f0f0'>OK</div>
<svg style='left:1003px;top:315px' width='10' height='14'><path d='M0.5,0.5 L0.5,11 L3,8.6 L5,12.8 L6.8,12 L4.9,8 L8.3,8 Z' fill='#111' stroke='#eee' stroke-width='0.8'/></svg>
<svg style='left:0;top:0' width='200' height='40'><circle cx='57.35' cy='29.2' r='4.4' fill='#ec5f5a'/><circle cx='57.35' cy='29.2' r='1.6' fill='#8e1f1a'/><circle cx='70.3' cy='29.2' r='4.4' fill='#f2bd3c'/><circle cx='84' cy='29.2' r='4.4' fill='#3cc54a'/><path d='M100.2,29.3 L106.1,23.1 L112,29.3 L110.3,29.3 L110.3,33.9 L107.5,33.9 L107.5,30.8 L104.7,30.8 L104.7,33.9 L101.9,33.9 L101.9,29.3 Z' fill='#d4d4d4'/></svg>
<div style='position:absolute;left:525px;top:24.37px;white-space:nowrap;line-height:1;font-family:"Liberation Sans",sans-serif;font-size:8.9px;font-weight:normal;color:#e8e8e8;transform:scaleX(0.9810);transform-origin:0 0;-webkit-text-stroke:0.25px currentColor;'>Adobe InDesign 2021</div>
<svg style='left:1060px;top:20px' width='120' height='16'><path d='M6.3,10.2 C6.3,8.3 3.3,7.3 3.3,4.6 A4.25,4.25 0 1 1 11.8,4.6 C11.8,7.3 8.8,8.3 8.8,10.2 Z' fill='none' stroke='#cfcfcf' stroke-width='1.1' transform='translate(0,1.8)'/><rect x='6.2' y='11.3' width='2.7' height='2.6' rx='0.8' fill='#cfcfcf'/><path d='M27,6.5 H28.2 M35.8,6.5 H37 V13.5 H27 V6.5 M32,1.8 V10 M29.4,4.3 L32,1.8 L34.6,4.3' fill='none' stroke='#cfcfcf' stroke-width='1.1'/><rect x='47.3' y='2' width='0.8' height='12' fill='#3a3a3a'/><polyline points='104,7 106.5,9.6 109,7' fill='none' stroke='#cfcfcf' stroke-width='1'/><rect x='119' y='2' width='0.8' height='12' fill='#3a3a3a'/></svg>
<div style='position:absolute;left:1116.5px;top:24.31px;white-space:nowrap;line-height:1;font-family:"Liberation Sans",sans-serif;font-size:9.2px;font-weight:bold;color:#e6e6e6;transform:scaleX(0.8976);transform-origin:0 0;-webkit-text-stroke:0.25px currentColor;'>Essentials</div>
<div style='position:absolute;left:1183.3px;top:21.8px;width:86.3px;height:12.6px;background:#3a3a3a;border:1px solid #575757;border-radius:3px'></div>
<svg style='left:1185px;top:23px' width='16' height='11'><circle cx='4.2' cy='4.6' r='2.8' fill='none' stroke='#d0d0d0' stroke-width='1.1'/><path d='M6.2,6.6 L8.6,9' stroke='#d0d0d0' stroke-width='1.3'/><polyline points='9.6,4.3 11.6,6.3 13.6,4.3' fill='none' stroke='#d0d0d0' stroke-width='1'/></svg>
<div style='position:absolute;left:1201px;top:24.79px;white-space:nowrap;line-height:1;font-family:"Liberation Sans",sans-serif;font-size:8.4px;font-weight:normal;color:#7b7b7b;transform:scaleX(0.8379);transform-origin:0 0;-webkit-text-stroke:0.25px currentColor;'>Adobe Stock</div>
<svg style='left:51.5px;top:42px' width='6' height='4'><path d='M0.5,0.5 L2.5,2 L0.5,3.5 M3,0.5 L5,2 L3,3.5' fill='none' stroke='#9a9a9a' stroke-width='0.9'/></svg>
<svg style='left:79px;top:42px' width='6' height='4'><path d='M0.5,0.5 L2.5,2 L0.5,3.5 M3,0.5 L5,2 L3,3.5' fill='none' stroke='#9a9a9a' stroke-width='0.9'/></svg>
<svg style='left:1188px;top:42px' width='6' height='4'><path d='M2.5,0.5 L0.5,2 L2.5,3.5 M5,0.5 L3,2 L5,3.5' fill='none' stroke='#9a9a9a' stroke-width='0.9'/></svg>
<svg style='left:1271px;top:42px' width='6' height='4'><path d='M2.5,0.5 L0.5,2 L2.5,3.5 M5,0.5 L3,2 L5,3.5' fill='none' stroke='#9a9a9a' stroke-width='0.9'/></svg>
<svg style='left:142px;top:47px' width='6' height='6'><path d='M0.7,0.7 L5.3,5.3 M5.3,0.7 L0.7,5.3' stroke='#d8d8d8' stroke-width='1'/></svg>
<div style='position:absolute;left:153.75px;top:46.87px;white-space:nowrap;line-height:1;font-family:"Liberation Sans",sans-serif;font-size:7.6px;font-weight:normal;color:#e6e6e6;transform:scaleX(0.9856);transform-origin:0 0;-webkit-text-stroke:0.25px currentColor;-webkit-text-stroke:0.4px #e6e6e6'>*Untitled-2 @ 57% [GPU Preview]</div>
<div style='position:absolute;left:54.3px;top:50.8px;width:12.7px;height:2px;background:#3a3a3a;'></div>
<div style='position:absolute;left:96.6px;top:50.8px;width:13.4px;height:2px;background:#3a3a3a;'></div>
<svg style='left:0;top:0' width='80' height='480'><path d='M57.6,60.5 L65.5,67 L61.6,67.4 L59.6,71 Z' fill='none' stroke='#c2c2c2' stroke-width='0.9'/><path d='M57.3,76.2 L65.8,82.8 L61.7,83.2 L59.5,87.6 Z' fill='#c2c2c2'/><path d='M57.6,92.3 H62.5 L64.6,94.5 V96.5 M57.6,92.3 V101.6 H62 M62.5,92.3 V94.5 H64.6' fill='none' stroke='#c2c2c2' stroke-width='0.9'/><path d='M63,96.5 L67.5,99.6 L63,102.4Z' fill='#c2c2c2'/><path d='M55.4,109 V117.6 M66.6,109 V117.6 M57.5,113.3 H64.5 M59,111.8 L57.5,113.3 L59,114.8 M63,111.8 L64.5,113.3 L63,114.8' fill='none' stroke='#c2c2c2' stroke-width='0.9'/><path d='M57.5,128 V134.3 H65.5 V128' fill='none' stroke='#c2c2c2' stroke-width='1'/><rect x='58.5' y='129.5' width='6' height='4' fill='#c2c2c2'/><path d='M59,124.2 L62,127.2' stroke='#c2c2c2' stroke-width='1'/><path d='M66.6,134.6 L68,133.2 L68,134.6Z' fill='#c2c2c2'/></svg>
<div style='position:absolute;left:51.7px;top:140px;width:18.1px;height:15px;background:#2a2a2a;border-radius:2px'></div>
<svg style='left:0;top:0' width='80' height='480'><path d='M56.8,143.3 H66.6 V146 H65.8 C65.5,144.6 65,144.3 63,144.3 V151.6 L64.3,152 V152.7 H59.1 V152 L60.4,151.6 V144.3 C58.4,144.3 57.9,144.6 57.6,146 H56.8Z' fill='#d0d0d0'/><path d='M67.5,154 L69,152.5 L69,154Z' fill='#c2c2c2'/><path d='M56,167.8 L65.8,158.5' stroke='#c2c2c2' stroke-width='1.1'/><path d='M56.5,184 L58,178.5 L62.5,175.5 L65.5,178.5 L62.5,183 Z' fill='#c2c2c2'/><path d='M62.5,175.5 L63.8,174.2 L66.8,177.2 L65.5,178.5' fill='#c2c2c2'/><path d='M67.2,185.5 L68.6,184.1 V185.5Z' fill='#c2c2c2'/><path d='M56.5,200.3 L57.3,196.8 L63.8,190.3 L66.2,192.7 L59.7,199.2 Z' fill='#c2c2c2'/><path d='M67.2,201.5 L68.6,200.1 V201.5Z' fill='#c2c2c2'/><rect x='55.9' y='206.8' width='9.8' height='9' fill='none' stroke='#c2c2c2' stroke-width='0.9'/><path d='M55.9,206.8 L65.7,215.8 M65.7,206.8 L55.9,215.8' stroke='#c2c2c2' stroke-width='0.9'/><path d='M67.2,217.5 L68.6,216.1 V217.5Z' fill='#c2c2c2'/><ellipse cx='61' cy='227.5' rx='5.2' ry='4.3' fill='none' stroke='#c2c2c2' stroke-width='0.9'/><path d='M67.2,233.5 L68.6,232.1 V233.5Z' fill='#c2c2c2'/><circle cx='64.2' cy='242' r='1.9' fill='none' stroke='#c2c2c2' stroke-width='0.9'/><circle cx='64.2' cy='248.5' r='1.9' fill='none' stroke='#c2c2c2' stroke-width='0.9'/><path d='M56.5,240 L62.6,246.9 M56.5,250.3 L62.6,243.6' stroke='#c2c2c2' stroke-width='0.9'/></svg>
<div style='position:absolute;left:48.2px;top:257.4px;width:25.5px;height:14.4px;background:#262626;border-radius:0 0 3px 3px'></div>
<div style='position:absolute;left:51.7px;top:262.36px;white-space:nowrap;line-height:1;font-family:"Liberation Sans",sans-serif;font-size:6.9px;font-weight:bold;color:#f0f0f0;transform:scaleX(1.1418);transform-origin:0 0;-webkit-text-stroke:0.25px currentColor;letter-spacing:0.6px'>3:24</div>
<div style='position:absolute;left:54.9px;top:272.9px;width:11.7px;height:4.8px;background:#666666;'></div>
<div style='position:absolute;left:48.2px;top:278.2px;width:25.5px;height:25.5px;background:#262626;border-radius:3px'></div>
<svg style='left:0;top:0' width='80' height='480'><rect x='55.4' y='285.4' width='10.4' height='11.5' fill='#e23a3f'/><circle cx='58' cy='288' r='0.6' fill='#f5c542'/><circle cx='63' cy='288' r='0.6' fill='#f5c542'/><circle cx='60.5' cy='291' r='0.6' fill='#f5c542'/><circle cx='58' cy='294' r='0.6' fill='#f5c542'/><circle cx='63' cy='294' r='0.6' fill='#f5c542'/><path d='M56.5,307 H64 L66,309 V315.7 H56.5Z' fill='#b8b8b8'/><path d='M58,309.5 H63 M58,311.5 H63 M58,313.5 H61' stroke='#555' stroke-width='0.7'/><path d='M56.5,332 L63.5,325 M62.3,323.3 L64.8,320.8 L67.5,323.5 L65,326' stroke='#c2c2c2' stroke-width='1.4' fill='none'/><path d='M63.5,331 H69' stroke='#c2c2c2' stroke-width='1'/><path d='M58.3,349 C56.3,346 55.8,343.5 56.4,342.8 C57,342.3 57.6,343 58.3,344.5 V339.8 C58.3,339 59.7,339 59.7,339.8 V343 V338.6 C59.7,337.8 61.1,337.8 61.1,338.6 V343 V339 C61.1,338.2 62.5,338.2 62.5,339 V343 V340.3 C62.5,339.5 63.9,339.5 63.9,340.3 V345 C63.9,347 63.3,348 62.8,349Z' fill='#c2c2c2'/><circle cx='60' cy='358.3' r='3.6' fill='none' stroke='#c2c2c2' stroke-width='1.1'/><path d='M62.6,361 L66,364.6' stroke='#c2c2c2' stroke-width='1.4'/><rect x='51.7' y='370.4' width='6.9' height='7.2' fill='none' stroke='#9a9a9a' stroke-width='0.9'/><rect x='53.3' y='372' width='3.7' height='4' fill='#9a9a9a'/><path d='M64.5,374 C67.5,373 69.5,375 69.5,378.5 M68,377.3 L69.5,379 L71,377.3 M65.8,372.5 L64.2,374 L65.8,375.5' fill='none' stroke='#8a8a8a' stroke-width='0.8'/><rect x='51' y='382.4' width='13.2' height='13.1' fill='#ffffff' stroke='#d0d0d0' stroke-width='0.5'/><path d='M51.5,395 L63.7,382.9' stroke='#d62a2a' stroke-width='1.2'/><rect x='57.5' y='388.4' width='12.7' height='12.8' fill='#ffffff'/><rect x='60.3' y='391.2' width='7.1' height='7.2' fill='#7a1f22'/><path d='M58,400.7 L69.7,388.9' stroke='#d62a2a' stroke-width='1.2'/><rect x='51.7' y='406.5' width='9' height='8.5' rx='1.5' fill='#2b2b2b'/><rect x='53.5' y='408.3' width='5.4' height='4.9' fill='none' stroke='#c2c2c2' stroke-width='0.9'/><path d='M64,407.6 H70.4 V409 M64,407.6 V409 M67.2,407.6 V414.3 M66,414.3 H68.4' fill='none' stroke='#8a8a8a' stroke-width='0.9'/><rect x='55.4' y='422.3' width='10.4' height='8.7' fill='#c8c8c8'/><path d='M55.9,430.6 L65.4,422.7' stroke='#c0392b' stroke-width='1.1'/><path d='M67.2,432.5 L68.6,431.1 V432.5Z' fill='#c2c2c2'/><rect x='57' y='444' width='9' height='5.5' fill='#c2c2c2'/><path d='M56,442.3 H57 M58.5,442.3 H59.5 M61,442.3 H62 M63.5,442.3 H64.5 M66,442.3 H67' stroke='#c2c2c2' stroke-width='0.8'/><path d='M67.2,449.5 L68.6,448.1 V449.5Z' fill='#c2c2c2'/></svg>
<div style='position:absolute;left:51.7px;top:458.2px;width:18.1px;height:13.6px;background:#2a2a2a;border-radius:2px'></div>
<svg style='left:0;top:0' width='80' height='480'><rect x='57' y='461' width='8.5' height='7' fill='#c2c2c2'/><rect x='58.5' y='462.5' width='5.5' height='4' fill='#555'/><path d='M67.5,470.5 L69,469 V470.5Z' fill='#c2c2c2'/></svg>
<div style='position:absolute;left:75px;top:75px;width:57px;height:1px;background:#3a3a3a;'></div>
<svg style='left:80px;top:54px' width='16' height='18'><path d='M7.1,12 C7.1,9.8 4.1,8.8 4.1,5.9 A4.45,4.45 0 1 1 13,5.9 C13,8.8 10,9.8 10,12 Z' fill='none' stroke='#c8c8c8' stroke-width='1.1'/><rect x='7.1' y='12.3' width='2.9' height='3.4' rx='1' fill='#c8c8c8'/></svg>
<div style='position:absolute;left:100.5px;top:61.11px;white-space:nowrap;line-height:1;font-family:"Liberation Sans",sans-serif;font-size:7.9px;font-weight:bold;color:#eeeeee;transform:scaleX(0.9628);transform-origin:0 0;-webkit-text-stroke:0.25px currentColor;'>Learn</div>
<div style='position:absolute;left:1038px;top:46.9px;width:160px;height:131px;background:#484848;'></div>
<div style='position:absolute;left:1038px;top:46.9px;width:160px;height:1.5px;background:#2a2a2a;'></div>
<div style='position:absolute;left:1038px;top:48.4px;width:51px;height:18.4px;background:#3b3b3b;'></div>
<div style='position:absolute;left:1153px;top:48.4px;width:45px;height:18.4px;background:#3b3b3b;'></div>
<div style='position:absolute;left:1048.1px;top:48.4px;width:0.8px;height:18.4px;background:#333333;'></div>
<div style='position:absolute;left:1058.8px;top:48.4px;width:0.8px;height:18.4px;background:#333333;'></div>
<div style='position:absolute;left:1068.6px;top:48.4px;width:0.8px;height:18.4px;background:#333333;'></div>
<div style='position:absolute;left:1078.8px;top:48.4px;width:0.8px;height:18.4px;background:#333333;'></div>
<svg style='left:1040px;top:52px' width='60' height='12'><rect x='6.5' y='4' width='1.2' height='5' fill='#bdbdbd'/><rect x='16.8' y='4' width='1.2' height='5' fill='#bdbdbd'/><path d='M28.2,4 C26.8,5 26.8,8 28.2,9' fill='none' stroke='#aaa' stroke-width='1'/><rect x='37' y='4' width='1.2' height='1.3' fill='#aaa'/><path d='M48.2,4 C46.8,5 46.8,8 48.2,9' fill='none' stroke='#aaa' stroke-width='1'/></svg>
<svg style='left:1092px;top:54px' width='6' height='9'><polyline points='0.8,3.3 2.8,1.2 4.8,3.3' fill='none' stroke='#bbb' stroke-width='0.9'/><polyline points='0.8,5.7 2.8,7.8 4.8,5.7' fill='none' stroke='#bbb' stroke-width='0.9'/></svg>
<div style='position:absolute;left:1100.4px;top:54.96px;white-space:nowrap;line-height:1;font-family:"Liberation Sans",sans-serif;font-size:8.2px;font-weight:bold;color:#eeeeee;transform:scaleX(0.9494);transform-origin:0 0;-webkit-text-stroke:0.25px currentColor;'>Table Styles</div>
<svg style='left:1170px;top:54px' width='26' height='9'><path d='M0.8,1 L3.5,4.3 L0.8,7.6 M4.4,1 L7.1,4.3 L4.4,7.6' fill='none' stroke='#d8d8d8' stroke-width='1'/><rect x='12' y='0.5' width='0.8' height='8' fill='#999'/><rect x='17.3' y='1.3' width='6.9' height='4.8' fill='#8a8a8a'/></svg>
<div style='position:absolute;left:1041.9px;top:72.13px;white-space:nowrap;line-height:1;font-family:"Liberation Sans",sans-serif;font-size:8.0px;font-weight:normal;color:#e0e0e0;transform:scaleX(0.9252);transform-origin:0 0;-webkit-text-stroke:0.25px currentColor;'>12x18 Tutorial Recording</div>
<svg style='left:1185px;top:70px' width='8' height='11'><path d='M5.8,0.5 L2,5 H4.6 L1.5,10 L6.5,4.3 H4 Z' fill='#c8c8c8'/></svg>
<div style='position:absolute;left:1038px;top:82.9px;width:160px;height:1px;background:#3e3e3e;'></div>
<div style='position:absolute;left:1063.5px;top:88.13px;white-space:nowrap;line-height:1;font-family:"Liberation Sans",sans-serif;font-size:8.0px;font-weight:normal;color:#d2d2d2;transform:scaleX(0.8956);transform-origin:0 0;-webkit-text-stroke:0.25px currentColor;'>[Basic Table]</div>
<div style='position:absolute;left:1038.5px;top:97.9px;width:159.2px;height:14.1px;background:#3f5b79;'></div>
<div style='position:absolute;left:1063.75px;top:101.83px;white-space:nowrap;line-height:1;font-family:"Liberation Sans",sans-serif;font-size:8.0px;font-weight:bold;color:#f2f2f2;transform:scaleX(0.9163);transform-origin:0 0;-webkit-text-stroke:0.25px currentColor;'>12x18 Tutorial Recording</div>
<div style='position:absolute;left:1038px;top:156.2px;width:160px;height:1px;background:#3e3e3e;'></div>
<div style='position:absolute;left:1197px;top:83px;width:1px;height:74px;background:#525252;'></div>
<svg style='left:1116px;top:159px' width='70' height='12'><path d='M1.8,2 H5 L6,3 H11 V9.3 H1.8Z' fill='#c8c8c8'/><rect x='19.3' y='2.3' width='8' height='7.4' fill='none' stroke='#7a7a7a' stroke-width='1'/><path d='M21.5,2.5 V9.5' stroke='#7a7a7a' stroke-width='0.8'/><path d='M28.3,8.8 L31.8,5.2' stroke='#7a7a7a' stroke-width='1.2'/><rect x='41' y='2.3' width='7.2' height='7.6' fill='none' stroke='#c2c2c2' stroke-width='1.1'/><path d='M44.6,4 L45.9,6.1 L44.6,8.2 L43.3,6.1Z' fill='#c2c2c2'/><path d='M59.3,3.2 H66.3 M61,3.2 V1.8 H64.6 V3.2 M60,4 H65.6 L65,10 H60.6Z' fill='#8f8f8f' stroke='#8f8f8f' stroke-width='0.6'/></svg>
<div style='position:absolute;left:1038px;top:172.7px;width:160px;height:1.3px;background:#2e2e2e;'></div>
<div style='position:absolute;left:1038px;top:174px;width:160px;height:4px;background:#3e3e3e;'></div>
<div style='position:absolute;left:1111px;top:174.3px;width:13px;height:3px;background:#333;'></div>
<div style='position:absolute;left:1232.5px;top:50.5px;width:13.2px;height:2px;background:#3a3a3a;'></div>
<svg style='left:1200px;top:50px' width='80' height='120'><path d='M7,10.3 H18 M7,14 H18 M7,17.8 H18' stroke='#bdbdbd' stroke-width='0.9'/><circle cx='11' cy='10.3' r='1.5' fill='#494949' stroke='#bdbdbd' stroke-width='0.9'/><circle cx='14.5' cy='14' r='1.5' fill='#494949' stroke='#bdbdbd' stroke-width='0.9'/><circle cx='11' cy='17.8' r='1.5' fill='#494949' stroke='#bdbdbd' stroke-width='0.9'/><path d='M7,29 Q8,27 12,27 V38.5 H7Z M13,27 Q17,27 18,29 V38.5 H13Z' fill='#c4c4c4'/><rect x='12.2' y='26' width='0.8' height='13' fill='#c4c4c4'/><path d='M7.3,45.5 H11 L12,46.8 H18 V55.7 H7.3Z' fill='none' stroke='#bdbdbd' stroke-width='0.9'/><rect x='9.5' y='50' width='6.5' height='4' fill='#bdbdbd'/><rect x='7.3' y='64.5' width='10.7' height='9' rx='1' fill='none' stroke='#bdbdbd' stroke-width='0.9'/><path d='M7.3,67 H18 M10,67 V73.5' stroke='#bdbdbd' stroke-width='0.9'/><rect x='9.5' y='82.6' width='8.5' height='8' fill='none' stroke='#bdbdbd' stroke-width='0.9'/><path d='M9.5,84.6 H18' stroke='#bdbdbd' stroke-width='0.9'/><rect x='6.7' y='88.6' width='5.3' height='5' fill='#c4c4c4' stroke='#494949' stroke-width='0.8'/></svg>
<div style='position:absolute;left:1203px;top:149.6px;width:72.8px;height:14.3px;background:#2f2f2f;border-radius:2px'></div>
<svg style='left:1200px;top:148px' width='30' height='18'><rect x='9.5' y='3' width='8.5' height='8.5' fill='none' stroke='#bdbdbd' stroke-width='0.9'/><path d='M9.5,5.2 H18 M11.5,7.3 H18 M11.5,9.4 H18' stroke='#bdbdbd' stroke-width='0.8'/><rect x='6.7' y='9.5' width='5.3' height='5' fill='#c4c4c4' stroke='#2f2f2f' stroke-width='0.8'/></svg>
<div style='position:absolute;left:1224.3px;top:61.13px;white-space:nowrap;line-height:1;font-family:"Liberation Sans",sans-serif;font-size:8.0px;font-weight:bold;color:#eeeeee;transform:scaleX(0.9627);transform-origin:0 0;-webkit-text-stroke:0.25px currentColor;'>Properties</div>
<div style='position:absolute;left:1224.3px;top:79.13px;white-space:nowrap;line-height:1;font-family:"Liberation Sans",sans-serif;font-size:8.0px;font-weight:bold;color:#eeeeee;transform:scaleX(0.9161);transform-origin:0 0;-webkit-text-stroke:0.25px currentColor;'>Pages</div>
<div style='position:absolute;left:1224.3px;top:97.83px;white-space:nowrap;line-height:1;font-family:"Liberation Sans",sans-serif;font-size:8.0px;font-weight:bold;color:#eeeeee;transform:scaleX(0.9605);transform-origin:0 0;-webkit-text-stroke:0.25px currentColor;'>CC Libraries</div>
<div style='position:absolute;left:1224.3px;top:116.93px;white-space:nowrap;line-height:1;font-family:"Liberation Sans",sans-serif;font-size:8.0px;font-weight:bold;color:#eeeeee;transform:scaleX(1.0142);transform-origin:0 0;-webkit-text-stroke:0.25px currentColor;'>Table</div>
<div style='position:absolute;left:1224.3px;top:135.73px;white-space:nowrap;line-height:1;font-family:"Liberation Sans",sans-serif;font-size:8.0px;font-weight:bold;color:#eeeeee;transform:scaleX(0.9415);transform-origin:0 0;-webkit-text-stroke:0.25px currentColor;'>Cell Styles</div>
<div style='position:absolute;left:1224.3px;top:153.88px;white-space:nowrap;line-height:1;font-family:"Liberation Sans",sans-serif;font-size:8.0px;font-weight:bold;color:#eeeeee;transform:scaleX(0.9741);transform-origin:0 0;-webkit-text-stroke:0.25px currentColor;'>Table Styles</div>
<div style='position:absolute;left:1200px;top:168px;width:80px;height:2px;background:#383838;'></div>
</body></html>
